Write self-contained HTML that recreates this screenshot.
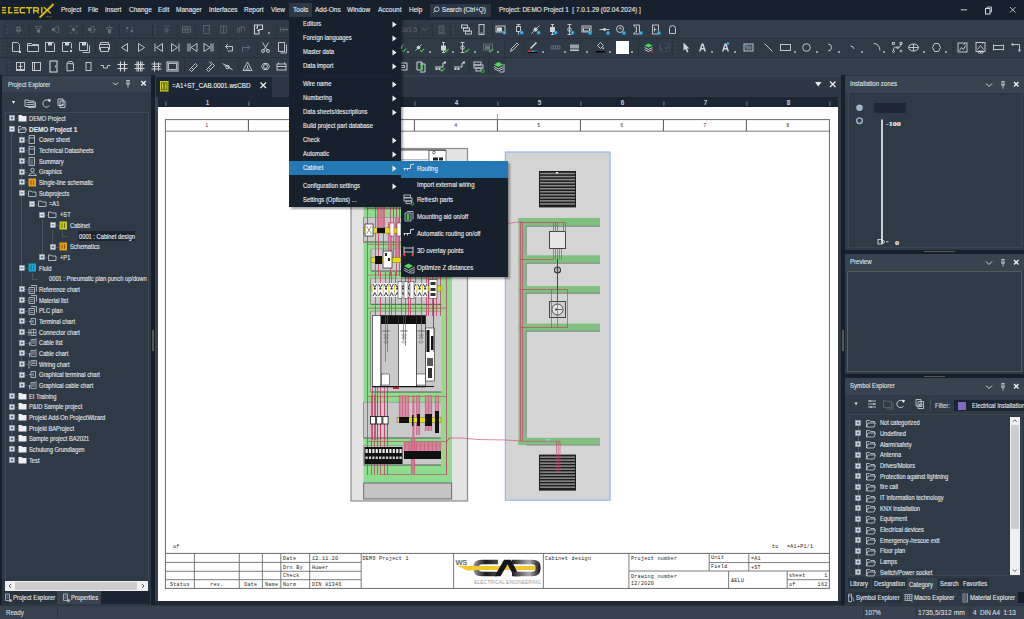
<!DOCTYPE html>
<html><head><meta charset="utf-8">
<style>
*{box-sizing:border-box}
html,body{margin:0;padding:0}
body{width:1024px;height:619px;overflow:hidden;position:relative;background:#333e4a;font-family:"Liberation Sans",sans-serif;color:#e6e9ec}
.a{position:absolute}
svg.a{overflow:visible}
.t{position:absolute;white-space:nowrap;-webkit-text-stroke:0.12px currentColor}
</style></head>
<body>
<div class="a" style="left:0px;top:0px;width:1024px;height:20px;background:#16212d;"></div>
<svg class="a" style="left:0px;top:0px;" width="60" height="20" viewBox="0 0 60 20"><g fill="#dcbc0e">
<rect x="2" y="7" width="4.2" height="1.4"/><rect x="2" y="9.6" width="3.6" height="1.3"/><rect x="2" y="12" width="4.2" height="1.4"/>
<rect x="8.2" y="7" width="1.4" height="6.4"/><rect x="8.2" y="12" width="4.4" height="1.4"/><rect x="8.2" y="7" width="2.4" height="1.3"/>
<rect x="14" y="7" width="4.8" height="1.4"/><rect x="14" y="9.6" width="4" height="1.3"/><rect x="14" y="12" width="4.8" height="1.4"/>
</g>
<g fill="none" stroke="#dcbc0e" stroke-width="1.4">
<path d="M25.2 7.7 H21.3 Q20.3 7.7 20.3 9 V11.4 Q20.3 12.7 21.3 12.7 H25.2"/>
<path d="M26 7.7 H32.3 M29.15 7.7 V13.4"/>
<path d="M33.7 13.4 V7.7 H37 Q38.6 7.7 38.6 9.2 Q38.6 10.7 37 10.7 H33.7 M36.6 10.7 L38.8 13.4"/>
<path d="M41.75 7 V13.4"/>
<path d="M43.8 7.2 L50.8 13.2"/>
</g>
<path d="M53.6 4 L39.5 17.6" stroke="#dcbc0e" stroke-width="1.9" fill="none"/>
<rect x="46" y="16.2" width="6" height="0.9" fill="#5a5020"/>
</svg>
<div class="a" style="left:289px;top:3px;width:23px;height:14px;background:#2e3945;"></div>
<div class="t" style="left:60.7px;top:6.43px;font-size:7px;line-height:7px;color:#e6e9ee;font-weight:normal;font-family:'Liberation Sans';transform:scaleX(0.93);transform-origin:0 0;">Project</div>
<div class="t" style="left:88px;top:6.43px;font-size:7px;line-height:7px;color:#e6e9ee;font-weight:normal;font-family:'Liberation Sans';transform:scaleX(0.93);transform-origin:0 0;">File</div>
<div class="t" style="left:105px;top:6.43px;font-size:7px;line-height:7px;color:#e6e9ee;font-weight:normal;font-family:'Liberation Sans';transform:scaleX(0.93);transform-origin:0 0;">Insert</div>
<div class="t" style="left:129px;top:6.43px;font-size:7px;line-height:7px;color:#e6e9ee;font-weight:normal;font-family:'Liberation Sans';transform:scaleX(0.93);transform-origin:0 0;">Change</div>
<div class="t" style="left:157.6px;top:6.43px;font-size:7px;line-height:7px;color:#e6e9ee;font-weight:normal;font-family:'Liberation Sans';transform:scaleX(0.93);transform-origin:0 0;">Edit</div>
<div class="t" style="left:175.8px;top:6.43px;font-size:7px;line-height:7px;color:#e6e9ee;font-weight:normal;font-family:'Liberation Sans';transform:scaleX(0.93);transform-origin:0 0;">Manager</div>
<div class="t" style="left:208.5px;top:6.43px;font-size:7px;line-height:7px;color:#e6e9ee;font-weight:normal;font-family:'Liberation Sans';transform:scaleX(0.93);transform-origin:0 0;">Interfaces</div>
<div class="t" style="left:244px;top:6.43px;font-size:7px;line-height:7px;color:#e6e9ee;font-weight:normal;font-family:'Liberation Sans';transform:scaleX(0.93);transform-origin:0 0;">Report</div>
<div class="t" style="left:271px;top:6.43px;font-size:7px;line-height:7px;color:#e6e9ee;font-weight:normal;font-family:'Liberation Sans';transform:scaleX(0.93);transform-origin:0 0;">View</div>
<div class="t" style="left:292.5px;top:6.43px;font-size:7px;line-height:7px;color:#e6e9ee;font-weight:normal;font-family:'Liberation Sans';transform:scaleX(0.93);transform-origin:0 0;">Tools</div>
<div class="t" style="left:315px;top:6.43px;font-size:7px;line-height:7px;color:#e6e9ee;font-weight:normal;font-family:'Liberation Sans';transform:scaleX(0.93);transform-origin:0 0;">Add-Ons</div>
<div class="t" style="left:346.7px;top:6.43px;font-size:7px;line-height:7px;color:#e6e9ee;font-weight:normal;font-family:'Liberation Sans';transform:scaleX(0.93);transform-origin:0 0;">Window</div>
<div class="t" style="left:377.5px;top:6.43px;font-size:7px;line-height:7px;color:#e6e9ee;font-weight:normal;font-family:'Liberation Sans';transform:scaleX(0.93);transform-origin:0 0;">Account</div>
<div class="t" style="left:408.5px;top:6.43px;font-size:7px;line-height:7px;color:#e6e9ee;font-weight:normal;font-family:'Liberation Sans';transform:scaleX(0.93);transform-origin:0 0;">Help</div>
<div class="a" style="left:430px;top:3.5px;width:61px;height:13px;background:#2c3743;border-radius:1px"></div>
<svg class="a" style="left:433px;top:6px;" width="7" height="7" viewBox="0 0 7 7"><circle cx="3.8" cy="3.2" r="2.3" fill="none" stroke="#cfd4da" stroke-width="0.9"/><path d="M2.2 4.8 L0.3 6.7" stroke="#cfd4da" stroke-width="0.9"/></svg>
<div class="t" style="left:442px;top:6.43px;font-size:7px;line-height:7px;color:#e6e9ee;font-weight:normal;font-family:'Liberation Sans';transform:scaleX(0.89);transform-origin:0 0;">Search (Ctrl+Q)</div>
<div class="t" style="left:498.5px;top:6.43px;font-size:7px;line-height:7px;color:#e6e9ee;font-weight:normal;font-family:'Liberation Sans';transform:scaleX(0.915);transform-origin:0 0;">Project: DEMO Project 1&nbsp; [ 7.0.1.29 (02.04.2024) ]</div>
<svg class="a" style="left:960px;top:4px;" width="64" height="12" viewBox="0 0 64 12"><path d="M0.8 5.8 H7" stroke="#c9ced4" stroke-width="1"/>
<rect x="25.5" y="4.5" width="4.5" height="5.5" fill="none" stroke="#d0d5da" stroke-width="1"/><path d="M27 4.5 V3 H31.5 V8 H30" fill="none" stroke="#d0d5da" stroke-width="0.9"/>
<path d="M50 3 L55.5 8.5 M55.5 3 L50 8.5" stroke="#c9ced4" stroke-width="0.9"/></svg>
<div class="a" style="left:0px;top:20px;width:1024px;height:57px;background:#323e4a;"></div>
<div class="a" style="left:3px;top:20px;width:677px;height:18px;background:#2e3a46;"></div>
<div class="a" style="left:2px;top:39px;width:1022px;height:17.5px;background:#2e3a46;"></div>
<div class="a" style="left:5px;top:57.5px;width:501px;height:17.5px;background:#2e3a46;"></div>
<div class="a" style="left:0px;top:38px;width:1024px;height:1px;background:#27313b;"></div>
<div class="a" style="left:0px;top:56.5px;width:1024px;height:1px;background:#27313b;"></div>
<div class="a" style="left:0px;top:75px;width:1024px;height:0.8px;background:#27313b;"></div>
<div class="a" style="left:28.5px;top:21.5px;width:1px;height:15px;background:#27313b;"></div>
<div class="a" style="left:82px;top:21.5px;width:1px;height:15px;background:#27313b;"></div>
<div class="a" style="left:118.5px;top:21.5px;width:1px;height:15px;background:#27313b;"></div>
<div class="a" style="left:152px;top:21.5px;width:1px;height:15px;background:#27313b;"></div>
<div class="a" style="left:176.5px;top:21.5px;width:1px;height:15px;background:#27313b;"></div>
<div class="a" style="left:195px;top:21.5px;width:1px;height:15px;background:#27313b;"></div>
<div class="a" style="left:250px;top:21.5px;width:1px;height:15px;background:#27313b;"></div>
<div class="a" style="left:275.5px;top:21.5px;width:1px;height:15px;background:#27313b;"></div>
<div class="a" style="left:418px;top:21.5px;width:1px;height:15px;background:#27313b;"></div>
<div class="a" style="left:431.5px;top:21.5px;width:1px;height:15px;background:#27313b;"></div>
<div class="a" style="left:450px;top:21.5px;width:1px;height:15px;background:#27313b;"></div>
<div class="a" style="left:491.5px;top:21.5px;width:1px;height:15px;background:#27313b;"></div>
<div class="a" style="left:94.5px;top:40.5px;width:1px;height:14.5px;background:#27313b;"></div>
<div class="a" style="left:114.5px;top:40.5px;width:1px;height:14.5px;background:#27313b;"></div>
<div class="a" style="left:219.5px;top:40.5px;width:1px;height:14.5px;background:#27313b;"></div>
<div class="a" style="left:256.5px;top:40.5px;width:1px;height:14.5px;background:#27313b;"></div>
<div class="a" style="left:503.5px;top:40.5px;width:1px;height:14.5px;background:#27313b;"></div>
<div class="a" style="left:523.5px;top:40.5px;width:1px;height:14.5px;background:#27313b;"></div>
<div class="a" style="left:638px;top:40.5px;width:1px;height:14.5px;background:#27313b;"></div>
<div class="a" style="left:672px;top:40.5px;width:1px;height:14.5px;background:#27313b;"></div>
<div class="a" style="left:952.5px;top:40.5px;width:1px;height:14.5px;background:#27313b;"></div>
<div class="a" style="left:989.5px;top:40.5px;width:1px;height:14.5px;background:#27313b;"></div>
<div class="a" style="left:183.5px;top:59px;width:1px;height:14.5px;background:#27313b;"></div>
<div class="a" style="left:237.5px;top:59px;width:1px;height:14.5px;background:#27313b;"></div>
<div class="a" style="left:412px;top:59px;width:1px;height:14.5px;background:#27313b;"></div>
<div class="a" style="left:449px;top:59px;width:1px;height:14.5px;background:#27313b;"></div>
<div class="a" style="left:469px;top:59px;width:1px;height:14.5px;background:#27313b;"></div>
<div class="a" style="left:488px;top:59px;width:1px;height:14.5px;background:#27313b;"></div>
<svg class="a" style="left:-1px;top:21px" width="16" height="16" viewBox="-8 -8 16 16"><rect x="-0.5" y="-4.5" width="1" height="1" fill="#5d6670"/><rect x="-0.5" y="-0.5" width="1" height="1" fill="#5d6670"/><rect x="-0.5" y="3.5" width="1" height="1" fill="#5d6670"/></svg>
<svg class="a" style="left:147px;top:21px" width="16" height="16" viewBox="-8 -8 16 16"><rect x="-0.5" y="-4.5" width="1" height="1" fill="#5d6670"/><rect x="-0.5" y="-0.5" width="1" height="1" fill="#5d6670"/><rect x="-0.5" y="3.5" width="1" height="1" fill="#5d6670"/></svg>
<svg class="a" style="left:445px;top:21px" width="16" height="16" viewBox="-8 -8 16 16"><rect x="-0.5" y="-4.5" width="1" height="1" fill="#5d6670"/><rect x="-0.5" y="-0.5" width="1" height="1" fill="#5d6670"/><rect x="-0.5" y="3.5" width="1" height="1" fill="#5d6670"/></svg>
<svg class="a" style="left:10px;top:21px" width="16" height="16" viewBox="-8 -8 16 16"><g transform="translate(0.5 0.5) scale(0.78)"><path d="M-1.5 -4 V3 M1.5 -4 V3 M-4 1.5 H4 M0 3 V5" stroke="#6a737d" stroke-width="0.9" fill="none" /><rect x="-2" y="-3" width="4" height="5" stroke="#6a737d" stroke-width="0.9" fill="none"/></g></svg>
<svg class="a" style="left:30px;top:21px" width="16" height="16" viewBox="-8 -8 16 16"><g transform="translate(0.5 0.5) scale(0.78)"><path d="M-4 -4 H4 L2 -1 H-2 Z" stroke="#6a737d" stroke-width="0.9" fill="none" /><rect x="-1.5" y="0.5" width="3" height="3" stroke="#6a737d" stroke-width="1" fill="#6a737d"/></g></svg>
<svg class="a" style="left:47px;top:21px" width="16" height="16" viewBox="-8 -8 16 16"><g transform="translate(0.5 0.5) scale(0.78)"><rect x="-4" y="-1.5" width="3" height="3" stroke="#6a737d" stroke-width="1" fill="#6a737d"/><path d="M-1 -1.5 L2 -4 H4 V4 H2 L-1 1.5" stroke="#6a737d" stroke-width="0.9" fill="none" /></g></svg>
<svg class="a" style="left:65px;top:21px" width="16" height="16" viewBox="-8 -8 16 16"><g transform="translate(0.5 0.5) scale(0.78)"><path d="M-4.5 -4.5 h2 M2.5 -4.5 h2 v2 M4.5 2.5 v2 h-2 M-2.5 4.5 h-2 v-2 M-4.5 -2.5 v-2" stroke="#6a737d" stroke-width="0.9" fill="none" /><circle cx="0" cy="0" r="1.8" stroke="#6a737d" stroke-width="1" fill="#6a737d"/></g></svg>
<svg class="a" style="left:84px;top:21px" width="16" height="16" viewBox="-8 -8 16 16"><g transform="translate(0.5 0.5) scale(0.78)"><rect x="-2" y="-3.5" width="4" height="7" stroke="#6a737d" stroke-width="0.9" fill="none"/><path d="M-5 0 H-2 M2 0 H5" stroke="#6a737d" stroke-width="0.9" fill="none" /><rect x="-5" y="-1.5" width="3" height="3" stroke="#6a737d" stroke-width="1" fill="#6a737d"/></g></svg>
<svg class="a" style="left:101px;top:21px" width="16" height="16" viewBox="-8 -8 16 16"><g transform="translate(0.5 0.5) scale(0.78)"><path d="M0 -5 V-3 M-4 -2.5 H4 L2 0 H-2 Z" stroke="#6a737d" stroke-width="0.9" fill="none" /><rect x="-1.5" y="1" width="3" height="3.5" stroke="#6a737d" stroke-width="1" fill="#6a737d"/></g></svg>
<svg class="a" style="left:121px;top:21px" width="16" height="16" viewBox="-8 -8 16 16"><g transform="translate(0.5 0.5) scale(0.78)"><rect x="-4" y="-3" width="2.5" height="2.5" stroke="#6a737d" stroke-width="0" fill="#6a737d"/><rect x="1.5" y="0.5" width="3" height="3" stroke="#6a737d" stroke-width="0" fill="#6a737d"/><path d="M2 -2 h2 M-4 2 h2" stroke="#6a737d" stroke-width="0.9" fill="none" /></g></svg>
<svg class="a" style="left:158px;top:21px" width="16" height="16" viewBox="-8 -8 16 16"><g transform="translate(0.5 0.5) scale(0.78)"><path d="M0 -5 V-3 M-3 -5 L-2 -3.5 M3 -5 L2 -3.5" stroke="#6a737d" stroke-width="0.9" fill="none" /><path d="M-2 -1 H2 V2 H-2 Z M0 2 V5" stroke="#6a737d" stroke-width="0.9" fill="none" /></g></svg>
<svg class="a" style="left:178px;top:21px" width="16" height="16" viewBox="-8 -8 16 16"><g transform="translate(0.5 0.5) scale(0.78)"><rect x="-5" y="-3.5" width="10" height="7" stroke="#6a737d" stroke-width="0.9" fill="none"/><path d="M-5 0 H5 M-1.7 -3.5 V3.5 M1.7 -3.5 V3.5" stroke="#6a737d" stroke-width="0.9" fill="none" /></g></svg>
<svg class="a" style="left:198px;top:21px" width="16" height="16" viewBox="-8 -8 16 16"><g transform="translate(0.5 0.5) scale(0.78)"><rect x="-3.5" y="-5" width="7" height="10" stroke="#6a737d" stroke-width="0.9" fill="none"/><path d="M2 -1 V1" stroke="#6a737d" stroke-width="0.9" fill="none" /></g></svg>
<svg class="a" style="left:215px;top:21px" width="16" height="16" viewBox="-8 -8 16 16"><g transform="translate(0.5 0.5) scale(0.78)"><rect x="-3.5" y="-4.5" width="7" height="9" stroke="#6a737d" stroke-width="0.9" fill="none"/><path d="M0 -4.5 V4.5" stroke="#6a737d" stroke-width="0.9" fill="none" /></g></svg>
<svg class="a" style="left:232px;top:21px" width="16" height="16" viewBox="-8 -8 16 16"><g transform="translate(0.5 0.5) scale(0.78)"><path d="M-4 -1 L3 -4 L5 -3 V2 M-4 -1 V4 M-1.5 -2 V4.5 M1 -3 V4" stroke="#6a737d" stroke-width="0.9" fill="none" /></g></svg>
<svg class="a" style="left:250px;top:21px" width="16" height="16" viewBox="-8 -8 16 16"><g transform="translate(0.5 0.5)"><path d="M-4 -4.5 H4 V0 H0.5 V4.5 H-4 Z M-1 -4.5 V-1.5 H-2.5 M0.5 1 H-1.5" stroke="#d0d4d9" stroke-width="1.1" fill="none" /></g></svg>
<svg class="a" style="left:276px;top:21px" width="16" height="16" viewBox="-8 -8 16 16"><g transform="translate(0.5 0.5) scale(0.78)"><path d="M-5 -3 V3 M-5 0 H5 M-1 -3 V3 M3 -2 V2" stroke="#6a737d" stroke-width="0.9" fill="none" /></g></svg>
<svg class="a" style="left:433px;top:21px" width="16" height="16" viewBox="-8 -8 16 16"><g transform="translate(0.5 0.5) scale(0.78)"><rect x="-3" y="-4.5" width="6" height="8" stroke="#6a737d" stroke-width="0.9" fill="none"/><path d="M-1.5 -2.5 h3 M-1.5 -0.5 h3 M-1.5 1.5 h3 M-5 5 H5" stroke="#6a737d" stroke-width="0.8" fill="none" /></g></svg>
<svg class="a" style="left:458px;top:21px" width="16" height="16" viewBox="-8 -8 16 16"><g transform="translate(0.5 0.5)"><rect x="-5" y="-4.5" width="6" height="3" stroke="#d0d4d9" stroke-width="0.9" fill="none"/><rect x="-3" y="-1.5" width="6" height="3" stroke="#d0d4d9" stroke-width="0.9" fill="none"/><rect x="-1" y="1.5" width="6" height="3" stroke="#d0d4d9" stroke-width="0.9" fill="none"/></g></svg>
<svg class="a" style="left:473px;top:21px" width="16" height="16" viewBox="-8 -8 16 16"><g transform="translate(0.5 0.5)"><rect x="-2.5" y="-5" width="5" height="10" stroke="#d0d4d9" stroke-width="0.9" fill="none"/><path d="M-1 3.5 H1" stroke="#d0d4d9" stroke-width="0.9" fill="none" /></g></svg>
<svg class="a" style="left:492px;top:21px" width="16" height="16" viewBox="-8 -8 16 16"><g transform="translate(0.5 0.5)"><rect x="-4.5" y="-3.5" width="9" height="6" stroke="#d0d4d9" stroke-width="0.9" fill="none"/><rect x="-3" y="-1.5" width="4" height="3" stroke="#d0d4d9" stroke-width="1" fill="#d0d4d9"/><circle cx="3.8" cy="3.2" r="1.9" stroke="none" stroke-width="0" fill="#1a98d5"/><path d="M3.8 2.3000000000000003 V4.1000000000000005" stroke="#fff" stroke-width="0.5" fill="none" /></g></svg>
<svg class="a" style="left:510px;top:21px" width="16" height="16" viewBox="-8 -8 16 16"><g transform="translate(0.5 0.5)"><rect x="-2" y="-3" width="4" height="5" stroke="#d0d4d9" stroke-width="0.9" fill="none"/><path d="M0 -5 V-3 M0 2 V5 M-2 -5 H2" stroke="#d0d4d9" stroke-width="0.9" fill="none" /><circle cx="3.2" cy="3.2" r="1.9" stroke="none" stroke-width="0" fill="#1a98d5"/><path d="M3.2 2.3000000000000003 V4.1000000000000005" stroke="#fff" stroke-width="0.5" fill="none" /></g></svg>
<svg class="a" style="left:527px;top:21px" width="16" height="16" viewBox="-8 -8 16 16"><g transform="translate(0.5 0.5)"><path d="M-4 4 L4 -4" stroke="#d0d4d9" stroke-width="0.9" fill="none" /><circle cx="0" cy="0" r="1.6" stroke="#d0d4d9" stroke-width="1" fill="#d0d4d9"/><circle cx="3.2" cy="3.2" r="1.9" stroke="none" stroke-width="0" fill="#1a98d5"/><path d="M3.2 2.3000000000000003 V4.1000000000000005" stroke="#fff" stroke-width="0.5" fill="none" /></g></svg>
<svg class="a" style="left:544px;top:21px" width="16" height="16" viewBox="-8 -8 16 16"><g transform="translate(0.5 0.5)"><path d="M0 -5 V5 M-1.5 -5 H1.5 M-1.5 5 H1.5" stroke="#d0d4d9" stroke-width="0.9" fill="none" /><rect x="-2" y="-2" width="4" height="4" stroke="#d0d4d9" stroke-width="1" fill="#d0d4d9"/><circle cx="3.2" cy="3.2" r="1.9" stroke="none" stroke-width="0" fill="#1a98d5"/><path d="M3.2 2.3000000000000003 V4.1000000000000005" stroke="#fff" stroke-width="0.5" fill="none" /></g></svg>
<svg class="a" style="left:561px;top:21px" width="16" height="16" viewBox="-8 -8 16 16"><g transform="translate(0.5 0.5)"><path d="M0 -5 V5 M-2 -5 H2 M-2 5 H2" stroke="#d0d4d9" stroke-width="0.9" fill="none" /><circle cx="0" cy="0" r="1.8" stroke="#d0d4d9" stroke-width="0.9" fill="none"/><circle cx="3.2" cy="3.2" r="1.9" stroke="none" stroke-width="0" fill="#1a98d5"/><path d="M3.2 2.3000000000000003 V4.1000000000000005" stroke="#fff" stroke-width="0.5" fill="none" /></g></svg>
<svg class="a" style="left:578px;top:21px" width="16" height="16" viewBox="-8 -8 16 16"><g transform="translate(0.5 0.5)"><rect x="-4.5" y="-3.5" width="9" height="6" stroke="#d0d4d9" stroke-width="0.9" fill="none"/><rect x="-3" y="-1.5" width="6" height="3" stroke="#d0d4d9" stroke-width="0.9" fill="none"/><circle cx="3.5" cy="3.5" r="1.9" stroke="none" stroke-width="0" fill="#1a98d5"/><path d="M3.5 2.6 V4.4" stroke="#fff" stroke-width="0.5" fill="none" /></g></svg>
<svg class="a" style="left:596px;top:21px" width="16" height="16" viewBox="-8 -8 16 16"><g transform="translate(0.5 0.5)"><path d="M-5 0 H5" stroke="#d0d4d9" stroke-width="0.9" fill="none" /><rect x="-1" y="-1.5" width="2" height="3" stroke="#d0d4d9" stroke-width="0" fill="#d0d4d9"/><circle cx="3.5" cy="3.5" r="1.9" stroke="none" stroke-width="0" fill="#1a98d5"/><path d="M3.5 2.6 V4.4" stroke="#fff" stroke-width="0.5" fill="none" /></g></svg>
<svg class="a" style="left:612px;top:21px" width="16" height="16" viewBox="-8 -8 16 16"><g transform="translate(0.5 0.5)"><circle cx="-0.5" cy="-0.5" r="3.5" stroke="#d0d4d9" stroke-width="0.9" fill="none"/><path d="M-0.5 -2.5 V-0.5 H1" stroke="#d0d4d9" stroke-width="0.9" fill="none" /><circle cx="3.5" cy="3.5" r="1.9" stroke="none" stroke-width="0" fill="#1a98d5"/><path d="M3.5 2.6 V4.4" stroke="#fff" stroke-width="0.5" fill="none" /></g></svg>
<svg class="a" style="left:629px;top:21px" width="16" height="16" viewBox="-8 -8 16 16"><g transform="translate(0.5 0.5)"><path d="M-4 -4.5 H2 V4.5 H-4 M-4 -4.5 L-2 -2 M-4 4.5 L-2 2 M-1 -3 V3" stroke="#d0d4d9" stroke-width="0.9" fill="none" /><circle cx="3.5" cy="3.5" r="1.9" stroke="none" stroke-width="0" fill="#1a98d5"/><path d="M3.5 2.6 V4.4" stroke="#fff" stroke-width="0.5" fill="none" /></g></svg>
<svg class="a" style="left:647px;top:21px" width="16" height="16" viewBox="-8 -8 16 16"><g transform="translate(0.5 0.5)"><rect x="-3" y="-4.5" width="6" height="9" stroke="#d0d4d9" stroke-width="0.9" fill="none"/><path d="M-1 -2 V2 M-1 0 H1" stroke="#d0d4d9" stroke-width="0.9" fill="none" /><circle cx="3.5" cy="3.5" r="1.9" stroke="none" stroke-width="0" fill="#1a98d5"/><path d="M3.5 2.6 V4.4" stroke="#fff" stroke-width="0.5" fill="none" /></g></svg>
<svg class="a" style="left:664px;top:21px" width="16" height="16" viewBox="-8 -8 16 16"><g transform="translate(0.5 0.5)"><path d="M-3 4 V-1 Q-3 -4 0 -4 Q3 -4 3 -1 V4 Z" stroke="#d0d4d9" stroke-width="0.9" fill="none" /></g></svg>
<svg class="a" style="left:260.5px;top:25px" width="16" height="16" viewBox="-8 -8 16 16"><rect x="-0.8" y="-0.8" width="1.6" height="1.6" fill="#d0d4d9"/></svg>
<div class="t" style="left:401px;top:25.63px;font-size:7px;line-height:7px;color:#58626c;letter-spacing:-0.2px;font-weight:normal;font-family:'Liberation Sans';">3x1,5</div>
<svg class="a" style="left:421px;top:26px" width="8" height="6" viewBox="0 0 8 6"><path d="M1 1.5 L4 4.5 L7 1.5" stroke="#58626c" fill="none" stroke-width="0.9"/></svg>
<svg class="a" style="left:-3px;top:39.5px" width="16" height="16" viewBox="-8 -8 16 16"><rect x="-0.5" y="-4.5" width="1" height="1" fill="#5d6670"/><rect x="-0.5" y="-0.5" width="1" height="1" fill="#5d6670"/><rect x="-0.5" y="3.5" width="1" height="1" fill="#5d6670"/></svg>
<svg class="a" style="left:667px;top:39.5px" width="16" height="16" viewBox="-8 -8 16 16"><rect x="-0.5" y="-4.5" width="1" height="1" fill="#5d6670"/><rect x="-0.5" y="-0.5" width="1" height="1" fill="#5d6670"/><rect x="-0.5" y="3.5" width="1" height="1" fill="#5d6670"/></svg>
<svg class="a" style="left:8px;top:39px" width="16" height="16" viewBox="-8 -8 16 16"><g transform="translate(0.5 0.5)"><path d="M-4 -5 H1 L3 -3 V4 H-4 Z" stroke="#d0d4d9" stroke-width="0.9" fill="none" /><rect x="2.5" y="3.5" width="2" height="2" stroke="none" stroke-width="0" fill="#d0d4d9"/></g></svg>
<svg class="a" style="left:25px;top:39px" width="16" height="16" viewBox="-8 -8 16 16"><g transform="translate(0.5 0.5)"><path d="M-6 -4 H-2 L-1 -3 H5 V4 H-6 Z M-6 -2 H5" stroke="#d0d4d9" stroke-width="0.9" fill="none" /></g></svg>
<svg class="a" style="left:42px;top:39px" width="16" height="16" viewBox="-8 -8 16 16"><g transform="translate(0.5 0.5)"><path d="M-5 -5 H3 L4 -4 V4 H-5 Z" stroke="#d0d4d9" stroke-width="0.9" fill="none" /><rect x="-2.5" y="-5.5" width="4" height="3.5" stroke="none" stroke-width="0" fill="#d0d4d9"/></g></svg>
<svg class="a" style="left:59px;top:39px" width="16" height="16" viewBox="-8 -8 16 16"><g transform="translate(0.5 0.5)"><path d="M-5 -5 H3 L4 -4 V1 M1 4 H-5 V-5" stroke="#d0d4d9" stroke-width="0.9" fill="none" /><rect x="-2.5" y="-5.5" width="4" height="3.5" stroke="none" stroke-width="0" fill="#d0d4d9"/><rect x="2.5" y="2.5" width="2" height="2" stroke="none" stroke-width="0" fill="#d0d4d9"/></g></svg>
<svg class="a" style="left:76px;top:39px" width="16" height="16" viewBox="-8 -8 16 16"><g transform="translate(0.5 0.5)"><path d="M-5 -5 H2 L3 -4 V3 H-5 Z M5 -2 V5 H-2" stroke="#d0d4d9" stroke-width="0.9" fill="none" /><rect x="-2.5" y="-5.5" width="4" height="3.5" stroke="none" stroke-width="0" fill="#d0d4d9"/></g></svg>
<svg class="a" style="left:96px;top:39px" width="16" height="16" viewBox="-8 -8 16 16"><g transform="translate(0.5 0.5)"><path d="M-4 -3 V-5 H4 V-3 M-4 2 H-5 V-3 H5 V2 H4 M-4 0 V4 H4 V0 Z" stroke="#d0d4d9" stroke-width="0.9" fill="none" /></g></svg>
<svg class="a" style="left:116px;top:39px" width="16" height="16" viewBox="-8 -8 16 16"><g transform="translate(0.5 0.5)"><path d="M3 -4 L-3 0 L3 4 Z" stroke="#d0d4d9" stroke-width="0.9" fill="none" /></g></svg>
<svg class="a" style="left:133px;top:39px" width="16" height="16" viewBox="-8 -8 16 16"><g transform="translate(0.5 0.5)"><path d="M-3 -4 L3 0 L-3 4 Z" stroke="#d0d4d9" stroke-width="0.9" fill="none" /></g></svg>
<svg class="a" style="left:150px;top:39px" width="16" height="16" viewBox="-8 -8 16 16"><g transform="translate(0.5 0.5)"><path d="M4 -4 L-2 0 L4 4 Z M-3.5 -4 V4" stroke="#d0d4d9" stroke-width="0.9" fill="none" /></g></svg>
<svg class="a" style="left:167px;top:39px" width="16" height="16" viewBox="-8 -8 16 16"><g transform="translate(0.5 0.5)"><path d="M-4 -4 L2 0 L-4 4 Z M3.5 -4 V4" stroke="#d0d4d9" stroke-width="0.9" fill="none" /></g></svg>
<svg class="a" style="left:184px;top:39px" width="16" height="16" viewBox="-8 -8 16 16"><g transform="translate(0.5 0.5)"><path d="M4.5 -4 L-1.5 0 L4.5 4 Z M-2.5 -4 V4 M-4.5 -4 V4" stroke="#d0d4d9" stroke-width="0.9" fill="none" /></g></svg>
<svg class="a" style="left:200px;top:39px" width="16" height="16" viewBox="-8 -8 16 16"><g transform="translate(0.5 0.5)"><path d="M-4.5 -4 L1.5 0 L-4.5 4 Z M2.5 -4 V4 M4.5 -4 V4" stroke="#d0d4d9" stroke-width="0.9" fill="none" /></g></svg>
<svg class="a" style="left:221px;top:39px" width="16" height="16" viewBox="-8 -8 16 16"><g transform="translate(0.5 0.5)"><path d="M-3.5 -1 H3 V3.5 H-2 M-1.5 -3.5 L-4 -1 L-1.5 1.5" stroke="#d0d4d9" stroke-width="0.9" fill="none" /></g></svg>
<svg class="a" style="left:238px;top:39px" width="16" height="16" viewBox="-8 -8 16 16"><g transform="translate(0.5 0.5)"><path d="M-4 4 V0 H3 M1 -2.5 L3.5 0 L1 2.5" stroke="#6a737d" stroke-width="0.9" fill="none" /></g></svg>
<svg class="a" style="left:257px;top:39px" width="16" height="16" viewBox="-8 -8 16 16"><g transform="translate(0.5 0.5)"><path d="M-3 -5 L2 3 M3 -5 L-2 3" stroke="#d0d4d9" stroke-width="0.9" fill="none" /><circle cx="-2.5" cy="3.5" r="1.5" stroke="#d0d4d9" stroke-width="0.9" fill="none"/><circle cx="2.5" cy="3.5" r="1.5" stroke="#d0d4d9" stroke-width="0.9" fill="none"/></g></svg>
<svg class="a" style="left:274px;top:39px" width="16" height="16" viewBox="-8 -8 16 16"><g transform="translate(0.5 0.5)"><path d="M-4 -5 H2 V4 H-4 Z M4 -3 V5.5 H-2" stroke="#d0d4d9" stroke-width="0.9" fill="none" /></g></svg>
<svg class="a" style="left:393px;top:39px" width="16" height="16" viewBox="-8 -8 16 16"><g transform="translate(0.5 0.5)"><path d="M-4 3 L2 -3" stroke="#d0d4d9" stroke-width="0.9" fill="none" /><circle cx="-1" cy="0" r="1.4" stroke="#d0d4d9" stroke-width="1" fill="#d0d4d9"/><path d="M0.5 2.8 L1.9 4.199999999999999 L4.7 1.1999999999999997" stroke="#3cc83c" stroke-width="1.1" fill="none" /></g></svg>
<svg class="a" style="left:411px;top:39px" width="16" height="16" viewBox="-8 -8 16 16"><g transform="translate(0.5 0.5)"><path d="M-4 3 L2 -3" stroke="#d0d4d9" stroke-width="0.9" fill="none" /><circle cx="-1" cy="0" r="1.4" stroke="#d0d4d9" stroke-width="1" fill="#d0d4d9"/><path d="M0.5 2.8 L1.9 4.199999999999999 L4.7 1.1999999999999997" stroke="#3cc83c" stroke-width="1.1" fill="none" /></g></svg>
<svg class="a" style="left:435px;top:39px" width="16" height="16" viewBox="-8 -8 16 16"><g transform="translate(0.5 0.5)"><path d="M0 -5 V5 M-1.5 -5 H1.5 M-1.5 5 H1.5" stroke="#d0d4d9" stroke-width="0.9" fill="none" /><rect x="-2" y="-1.5" width="4" height="4" stroke="#d0d4d9" stroke-width="1" fill="#d0d4d9"/><path d="M1 3 L2.4 4.4 L5.2 1.4" stroke="#3cc83c" stroke-width="1.1" fill="none" /></g></svg>
<svg class="a" style="left:456px;top:39px" width="16" height="16" viewBox="-8 -8 16 16"><g transform="translate(0.5 0.5)"><path d="M-2 -5 V5 M-4 -5 H0 M-4 5 H0" stroke="#d0d4d9" stroke-width="0.9" fill="none" /><circle cx="-2" cy="0" r="1.8" stroke="#d0d4d9" stroke-width="0.9" fill="none"/><path d="M0.5 3 L1.9 4.4 L4.7 1.4" stroke="#3cc83c" stroke-width="1.1" fill="none" /></g></svg>
<svg class="a" style="left:480px;top:39px" width="16" height="16" viewBox="-8 -8 16 16"><g transform="translate(0.5 0.5)"><rect x="-5" y="-3.5" width="9" height="6" stroke="#6a737d" stroke-width="0.9" fill="none"/><rect x="-3" y="-1.5" width="4" height="3" stroke="#6a737d" stroke-width="1" fill="#6a737d"/><path d="M0.5 3 L1.9 4.4 L4.7 1.4" stroke="#3cc83c" stroke-width="1.1" fill="none" /></g></svg>
<svg class="a" style="left:506px;top:39px" width="16" height="16" viewBox="-8 -8 16 16"><g transform="translate(0.5 0.5)"><path d="M-4 4 L-3 1 L2.5 -4.5 L4 -3 L-1.5 2.5 Z" stroke="#d0d4d9" stroke-width="0.9" fill="none" /></g></svg>
<svg class="a" style="left:525px;top:39px" width="16" height="16" viewBox="-8 -8 16 16"><g transform="translate(0.5 0.5)"><path d="M-3 1 L3 -5" stroke="#d0d4d9" stroke-width="1.6" fill="none" /><path d="M-5.5 3 H-2 V4.6 H-5.5 Z" fill="#e03030"/><path d="M-2 3 H1 V4.6 H-2 Z" fill="#30b030"/><path d="M1 3 H4 V4.6 H1 Z" fill="#3050e0"/><path d="M-5.5 4.6 H4 V5.6 H-5.5 Z" fill="#000"/></g></svg>
<svg class="a" style="left:547px;top:39px" width="16" height="16" viewBox="-8 -8 16 16"><g transform="translate(0.5 0.5)"><path d="M-4.5 -1.5 H4.5 M-4.5 -1.5 V1.5 M-2.2 -1.5 V1 M0 -1.5 V1.5 M2.2 -1.5 V1 M4.5 -1.5 V1.5 M-4.5 1.5 H4.5" stroke="#6a737d" stroke-width="0.9" fill="none" /></g></svg>
<svg class="a" style="left:566px;top:39px" width="16" height="16" viewBox="-8 -8 16 16"><g transform="translate(0.5 0.5)"><path d="M-4.5 -3 H4.5 V1 H-4.5 Z" fill="#9aa2aa"/><path d="M-4.5 2 H4.5 V3.4 H-4.5 Z" fill="#d0d4d9"/></g></svg>
<svg class="a" style="left:592px;top:39px" width="16" height="16" viewBox="-8 -8 16 16"><g transform="translate(0.5 0.5)"><path d="M-3 -2 L0 -5 L3 -2 L0 1 Z" stroke="#d0d4d9" stroke-width="0.9" fill="none" /><rect x="2" y="0" width="1.5" height="1.5" stroke="#d0d4d9" stroke-width="0" fill="#d0d4d9"/><path d="M-4.5 3.5 H4.5 V5 H-4.5 Z" fill="#000"/></g></svg>
<svg class="a" style="left:640px;top:39px" width="16" height="16" viewBox="-8 -8 16 16"><g transform="translate(0.5 0.5)"><path d="M-4 -2 L0 -4 L4 -2 L0 0 Z" fill="#4ddb4d"/><path d="M-4 0 L0 2 L4 0 M-4 2 L0 4 L4 2" stroke="#d0d4d9" stroke-width="0.9" fill="none" /><rect x="3" y="3.5" width="1.6" height="1.6" stroke="none" stroke-width="0" fill="#e02020"/></g></svg>
<svg class="a" style="left:656px;top:39px" width="16" height="16" viewBox="-8 -8 16 16"><g transform="translate(0.5 0.5)"><rect x="-5" y="-4" width="10" height="8" stroke="#3d4853" stroke-width="0.9" fill="none"/><path d="M-4 -2 V2 H-2 M0 0 L2 2 L4 -2" stroke="#4d5863" stroke-width="0.9" fill="none" /></g></svg>
<svg class="a" style="left:678px;top:39px" width="16" height="16" viewBox="-8 -8 16 16"><g transform="translate(0.5 0.5)"><path d="M-3 -5 L3 1 L0.5 1 L2 4.5 L0.5 5 L-1 1.5 L-3 3 Z" fill="#d0d4d9"/></g></svg>
<svg class="a" style="left:694px;top:39px" width="16" height="16" viewBox="-8 -8 16 16"><g transform="translate(0.5 0.5)"><path d="M-3.5 4 L-1 -4 H1 L3.5 4 H2 L1.3 2 H-1.3 L-2 4 Z M-0.9 0.6 H0.9 L0 -2.2 Z" fill="#d0d4d9"/></g></svg>
<svg class="a" style="left:717px;top:39px" width="16" height="16" viewBox="-8 -8 16 16"><g transform="translate(0.5 0.5)"><path d="M-3.5 4 L-1 -4 H1 L3.5 4 H2 L1.3 2 H-1.3 L-2 4 Z M-0.9 0.6 H0.9 L0 -2.2 Z" fill="#d0d4d9"/><circle cx="2.5" cy="-4" r="1.3" stroke="none" stroke-width="0" fill="#3ab0e8"/></g></svg>
<svg class="a" style="left:740px;top:39px" width="16" height="16" viewBox="-8 -8 16 16"><g transform="translate(0.5 0.5)"><rect x="-4.5" y="-3.5" width="9" height="7" stroke="#d0d4d9" stroke-width="0.9" fill="none"/><rect x="-3" y="-2" width="6" height="4" stroke="#8a939c" stroke-width="0" fill="#6a747e"/><rect x="-3" y="-2" width="1.5" height="1.5" stroke="none" stroke-width="0" fill="#3ab0e8"/></g></svg>
<svg class="a" style="left:760px;top:39px" width="16" height="16" viewBox="-8 -8 16 16"><g transform="translate(0.5 0.5)"><path d="M-4 -4 L4 4" stroke="#d0d4d9" stroke-width="0.9" fill="none" /></g></svg>
<svg class="a" style="left:777px;top:39px" width="16" height="16" viewBox="-8 -8 16 16"><g transform="translate(0.5 0.5)"><rect x="-5" y="-3" width="10" height="6" stroke="#d0d4d9" stroke-width="0.9" fill="none"/></g></svg>
<svg class="a" style="left:798px;top:39px" width="16" height="16" viewBox="-8 -8 16 16"><g transform="translate(0.5 0.5)"><circle cx="0" cy="0" r="3.8" stroke="#d0d4d9" stroke-width="0.9" fill="none"/></g></svg>
<svg class="a" style="left:821px;top:39px" width="16" height="16" viewBox="-8 -8 16 16"><g transform="translate(0.5 0.5)"><path d="M-1.5 -3.5 A3.5 3.5 0 0 1 -1.5 3.5" stroke="#d0d4d9" stroke-width="0.9" fill="none" /></g></svg>
<svg class="a" style="left:844px;top:39px" width="16" height="16" viewBox="-8 -8 16 16"><g transform="translate(0.5 0.5)"><path d="M-2 -1.5 Q1 -1.5 1.5 1.5" stroke="#d0d4d9" stroke-width="0.9" fill="none" /></g></svg>
<svg class="a" style="left:868px;top:39px" width="16" height="16" viewBox="-8 -8 16 16"><g transform="translate(0.5 0.5)"><path d="M-3 -4 Q3 -4 3.5 3" stroke="#d0d4d9" stroke-width="0.9" fill="none" /></g></svg>
<svg class="a" style="left:889px;top:39px" width="16" height="16" viewBox="-8 -8 16 16"><g transform="translate(0.5 0.5)"><path d="M-4 3.5 Q-4 -2 -1 0 Q2 2 3.5 -4" stroke="#d0d4d9" stroke-width="0.9" fill="none" /><rect x="-5" y="-5" width="2" height="2" stroke="#d0d4d9" stroke-width="0.8" fill="none"/><rect x="2.5" y="-5" width="2" height="2" stroke="#d0d4d9" stroke-width="0.8" fill="none"/><circle cx="-4" cy="4" r="1" stroke="#d0d4d9" stroke-width="0.8" fill="none"/><circle cx="3.5" cy="3.5" r="1" stroke="#d0d4d9" stroke-width="0.8" fill="none"/><circle cx="0" cy="0" r="1" stroke="#d0d4d9" stroke-width="0.8" fill="none"/></g></svg>
<svg class="a" style="left:905px;top:39px" width="16" height="16" viewBox="-8 -8 16 16"><g transform="translate(0.5 0.5)"><ellipse cx="0" cy="0" rx="5" ry="3.5" stroke="#d0d4d9" stroke-width="1" fill="none"/><path d="M-5 0 H5 M0 -3.5 V3.5" stroke="#d0d4d9" stroke-width="0.9" fill="none" /></g></svg>
<svg class="a" style="left:928px;top:39px" width="16" height="16" viewBox="-8 -8 16 16"><g transform="translate(0.5 0.5)"><path d="M-2 -4 H2 L4 0 L2 4 H-2 L-4 0 Z" stroke="#d0d4d9" stroke-width="0.9" fill="none" /></g></svg>
<svg class="a" style="left:954px;top:39px" width="16" height="16" viewBox="-8 -8 16 16"><g transform="translate(0.5 0.5)"><rect x="-4.5" y="-4.5" width="9" height="9" stroke="#d0d4d9" stroke-width="0.9" fill="none"/><path d="M-3 3 L-1 0 L1 2 L3 -2 M1 -3 L3 -4" stroke="#d0d4d9" stroke-width="0.9" fill="none" /></g></svg>
<svg class="a" style="left:972px;top:39px" width="16" height="16" viewBox="-8 -8 16 16"><g transform="translate(0.5 0.5)"><rect x="-4.5" y="-5" width="9" height="9" stroke="#d0d4d9" stroke-width="0.9" fill="none"/><path d="M-3 2 L0 -2 L3 2 M2 -4 L3 -5" stroke="#d0d4d9" stroke-width="0.9" fill="none" /><circle cx="-1" cy="4.5" r="1.3" stroke="#d0d4d9" stroke-width="0.8" fill="none"/><circle cx="1.5" cy="4.5" r="1.3" stroke="#d0d4d9" stroke-width="0.8" fill="none"/></g></svg>
<svg class="a" style="left:990px;top:39px" width="16" height="16" viewBox="-8 -8 16 16"><g transform="translate(0.5 0.5)"><path d="M-5 -3 V3 M5 -3 V3 M-5 -2 H5 M-5 2 H5" stroke="#d0d4d9" stroke-width="0.9" fill="none" /></g></svg>
<svg class="a" style="left:1008px;top:39px" width="16" height="16" viewBox="-8 -8 16 16"><g transform="translate(0.5 0.5)"><path d="M-4 -3 H3 V3" stroke="#d0d4d9" stroke-width="0.9" fill="none" /><rect x="-5" y="-4" width="2" height="2" stroke="#d0d4d9" stroke-width="0" fill="#d0d4d9"/><rect x="2" y="2" width="2" height="2" stroke="#d0d4d9" stroke-width="0" fill="#d0d4d9"/></g></svg>
<div class="a" style="left:616px;top:41px;width:12.5px;height:13px;background:#ffffff;"></div>
<svg class="a" style="left:399.5px;top:43.5px" width="16" height="16" viewBox="-8 -8 16 16"><rect x="-0.8" y="-0.8" width="1.6" height="1.6" fill="#d0d4d9"/></svg>
<svg class="a" style="left:422px;top:43.5px" width="16" height="16" viewBox="-8 -8 16 16"><rect x="-0.8" y="-0.8" width="1.6" height="1.6" fill="#d0d4d9"/></svg>
<svg class="a" style="left:444.5px;top:43.5px" width="16" height="16" viewBox="-8 -8 16 16"><rect x="-0.8" y="-0.8" width="1.6" height="1.6" fill="#d0d4d9"/></svg>
<svg class="a" style="left:467px;top:43.5px" width="16" height="16" viewBox="-8 -8 16 16"><rect x="-0.8" y="-0.8" width="1.6" height="1.6" fill="#d0d4d9"/></svg>
<svg class="a" style="left:489.5px;top:43.5px" width="16" height="16" viewBox="-8 -8 16 16"><rect x="-0.8" y="-0.8" width="1.6" height="1.6" fill="#d0d4d9"/></svg>
<svg class="a" style="left:534.5px;top:43.5px" width="16" height="16" viewBox="-8 -8 16 16"><rect x="-0.8" y="-0.8" width="1.6" height="1.6" fill="#d0d4d9"/></svg>
<svg class="a" style="left:557px;top:43.5px" width="16" height="16" viewBox="-8 -8 16 16"><rect x="-0.8" y="-0.8" width="1.6" height="1.6" fill="#d0d4d9"/></svg>
<svg class="a" style="left:579px;top:43.5px" width="16" height="16" viewBox="-8 -8 16 16"><rect x="-0.8" y="-0.8" width="1.6" height="1.6" fill="#d0d4d9"/></svg>
<svg class="a" style="left:602px;top:43.5px" width="16" height="16" viewBox="-8 -8 16 16"><rect x="-0.8" y="-0.8" width="1.6" height="1.6" fill="#d0d4d9"/></svg>
<svg class="a" style="left:624px;top:43.5px" width="16" height="16" viewBox="-8 -8 16 16"><rect x="-0.8" y="-0.8" width="1.6" height="1.6" fill="#d0d4d9"/></svg>
<svg class="a" style="left:704px;top:43.5px" width="16" height="16" viewBox="-8 -8 16 16"><rect x="-0.8" y="-0.8" width="1.6" height="1.6" fill="#d0d4d9"/></svg>
<svg class="a" style="left:727px;top:43.5px" width="16" height="16" viewBox="-8 -8 16 16"><rect x="-0.8" y="-0.8" width="1.6" height="1.6" fill="#d0d4d9"/></svg>
<svg class="a" style="left:787px;top:43.5px" width="16" height="16" viewBox="-8 -8 16 16"><rect x="-0.8" y="-0.8" width="1.6" height="1.6" fill="#d0d4d9"/></svg>
<svg class="a" style="left:809px;top:43.5px" width="16" height="16" viewBox="-8 -8 16 16"><rect x="-0.8" y="-0.8" width="1.6" height="1.6" fill="#d0d4d9"/></svg>
<svg class="a" style="left:831px;top:43.5px" width="16" height="16" viewBox="-8 -8 16 16"><rect x="-0.8" y="-0.8" width="1.6" height="1.6" fill="#d0d4d9"/></svg>
<svg class="a" style="left:854px;top:43.5px" width="16" height="16" viewBox="-8 -8 16 16"><rect x="-0.8" y="-0.8" width="1.6" height="1.6" fill="#d0d4d9"/></svg>
<svg class="a" style="left:876px;top:43.5px" width="16" height="16" viewBox="-8 -8 16 16"><rect x="-0.8" y="-0.8" width="1.6" height="1.6" fill="#d0d4d9"/></svg>
<svg class="a" style="left:916px;top:43.5px" width="16" height="16" viewBox="-8 -8 16 16"><rect x="-0.8" y="-0.8" width="1.6" height="1.6" fill="#d0d4d9"/></svg>
<svg class="a" style="left:938px;top:43.5px" width="16" height="16" viewBox="-8 -8 16 16"><rect x="-0.8" y="-0.8" width="1.6" height="1.6" fill="#d0d4d9"/></svg>
<svg class="a" style="left:0.5px;top:58px" width="16" height="16" viewBox="-8 -8 16 16"><rect x="-0.5" y="-4.5" width="1" height="1" fill="#5d6670"/><rect x="-0.5" y="-0.5" width="1" height="1" fill="#5d6670"/><rect x="-0.5" y="3.5" width="1" height="1" fill="#5d6670"/></svg>
<svg class="a" style="left:12px;top:58px" width="16" height="16" viewBox="-8 -8 16 16"><g transform="translate(0.5 0.5)"><rect x="-4" y="-4" width="8" height="8" stroke="#d0d4d9" stroke-width="0.9" fill="none"/><path d="M0 -4 V4 M-2 0 H2 M-4 3 H4" stroke="#d0d4d9" stroke-width="0.9" fill="none" /></g></svg>
<svg class="a" style="left:28px;top:58px" width="16" height="16" viewBox="-8 -8 16 16"><g transform="translate(0.5 0.5)"><rect x="-4" y="-4" width="8" height="8" stroke="#d0d4d9" stroke-width="0.9" fill="none"/><path d="M-2 -4 V4" stroke="#d0d4d9" stroke-width="0.9" fill="none" /></g></svg>
<svg class="a" style="left:45px;top:58px" width="16" height="16" viewBox="-8 -8 16 16"><g transform="translate(0.5 0.5)"><rect x="-3.5" y="-5.5" width="7" height="11" stroke="#d0d4d9" stroke-width="1.1" fill="none"/><path d="M2 -1 V1" stroke="#d0d4d9" stroke-width="0.9" fill="none" /></g></svg>
<svg class="a" style="left:62px;top:58px" width="16" height="16" viewBox="-8 -8 16 16"><g transform="translate(0.5 0.5)"><path d="M-3.5 -3.5 L3 -2.5 V4 L-3.5 4.5 Z M-3.5 -3.5 L-2 -5 H1.5 L3 -2.5" stroke="#d0d4d9" stroke-width="0.9" fill="none" /></g></svg>
<svg class="a" style="left:80px;top:58px" width="16" height="16" viewBox="-8 -8 16 16"><g transform="translate(0.5 0.5)"><rect x="-2.5" y="-4" width="5" height="8" stroke="#d0d4d9" stroke-width="0.9" fill="none"/></g></svg>
<svg class="a" style="left:97px;top:58px" width="16" height="16" viewBox="-8 -8 16 16"><g transform="translate(0.5 0.5)"><path d="M-5 -1 H-2 V1.5 H2 V-1 H5" stroke="#d0d4d9" stroke-width="0.9" fill="none" /></g></svg>
<svg class="a" style="left:114px;top:58px" width="16" height="16" viewBox="-8 -8 16 16"><g transform="translate(0.5 0.5)"><path d="M-5 -2 H5 M-5 2 H5 M-2 -5 V5 M2 -5 V5" stroke="#d0d4d9" stroke-width="1.2" fill="none" /></g></svg>
<svg class="a" style="left:131px;top:58px" width="16" height="16" viewBox="-8 -8 16 16"><g transform="translate(0.5 0.5)"><path d="M-5 -2 H5 M-5 2 H5 M-2.5 -5 V5 M-1 -5 V5 M1 -5 V5 M2.5 -5 V5" stroke="#d0d4d9" stroke-width="1" fill="none" /></g></svg>
<svg class="a" style="left:148px;top:58px" width="16" height="16" viewBox="-8 -8 16 16"><g transform="translate(0.5 0.5)"><path d="M-5 -2.5 H5 M-4 0 H4 M-5 2.5 H5 M-2 -5 V5 M2 -4 V4" stroke="#d0d4d9" stroke-width="1" fill="none" /></g></svg>
<svg class="a" style="left:164px;top:58px" width="16" height="16" viewBox="-8 -8 16 16"><g transform="translate(0.5 0.5)"><rect x="-5.5" y="-4.5" width="11" height="9" stroke="#d0d4d9" stroke-width="1" fill="none"/><rect x="-4" y="-3" width="8" height="6" stroke="#d0d4d9" stroke-width="0.8" fill="none"/></g></svg>
<svg class="a" style="left:185px;top:58px" width="16" height="16" viewBox="-8 -8 16 16"><g transform="translate(0.5 0.5)"><path d="M-4 3 L2 -3 L4 -1 L-2 5 Z M-2 1 L0 3" stroke="#d0d4d9" stroke-width="0.9" fill="none" /></g></svg>
<svg class="a" style="left:202px;top:58px" width="16" height="16" viewBox="-8 -8 16 16"><g transform="translate(0.5 0.5)"><path d="M-4 3 L2 -3 L4 -1 L-2 5 Z M-2 1 L0 3" stroke="#d0d4d9" stroke-width="0.9" fill="none" /><path d="M-1 -5 L0 -3 M1 -5 L0 -3" stroke="#d0d4d9" stroke-width="0.7" fill="none" /></g></svg>
<svg class="a" style="left:219px;top:58px" width="16" height="16" viewBox="-8 -8 16 16"><g transform="translate(0.5 0.5)"><path d="M-5 -3 L-2 -1 L3 2 L5 3 M-3 -2 L1 0 L4 3" stroke="#d0d4d9" stroke-width="0.9" fill="none" /><circle cx="0" cy="0.5" r="1.8" stroke="#d0d4d9" stroke-width="0.9" fill="none"/></g></svg>
<svg class="a" style="left:239px;top:58px" width="16" height="16" viewBox="-8 -8 16 16"><g transform="translate(0.5 0.5)"><path d="M0 -4.5 L4.5 4 H-4.5 Z M0 -1 V1.5 M-2 2.5 H2" stroke="#d0d4d9" stroke-width="0.9" fill="none" /></g></svg>
<svg class="a" style="left:257px;top:58px" width="16" height="16" viewBox="-8 -8 16 16"><g transform="translate(0.5 0.5)"><circle cx="0" cy="0" r="2" stroke="#d0d4d9" stroke-width="0.9" fill="none"/><path d="M-4 0 L-2 -3 H2 L4 0 L2 3 H-2 Z" stroke="#d0d4d9" stroke-width="0.9" fill="none" /></g></svg>
<svg class="a" style="left:273px;top:58px" width="16" height="16" viewBox="-8 -8 16 16"><g transform="translate(0.5 0.5)"><rect x="-4.5" y="-2.5" width="9" height="6" stroke="#d0d4d9" stroke-width="0.9" fill="none"/><path d="M-3 -2.5 V-4 M3 -2.5 V-4 M-4.5 0 H4.5" stroke="#d0d4d9" stroke-width="0.9" fill="none" /></g></svg>
<svg class="a" style="left:395px;top:58px" width="16" height="16" viewBox="-8 -8 16 16"><g transform="translate(0.5 0.5)"><path d="M-4 -3.5 H3.5 V3.5 H-4 M-4 -1 H1 V1 H-4" stroke="#d0d4d9" stroke-width="1" fill="none" /></g></svg>
<svg class="a" style="left:413px;top:58px" width="16" height="16" viewBox="-8 -8 16 16"><g transform="translate(0.5 0.5)"><path d="M-4.5 -4.5 H0.5 V3.5 H-4.5 Z M-1.5 -2.5 H3.5 V5.5 H-1.5" stroke="#d0d4d9" stroke-width="1" fill="none" /><rect x="-1" y="-2" width="2" height="5.5" stroke="none" stroke-width="0" fill="#3fdf3f"/></g></svg>
<svg class="a" style="left:432px;top:58px" width="16" height="16" viewBox="-8 -8 16 16"><g transform="translate(0.5 0.5)"><path d="M-5.5 0.5 H2.5 V-3.5 H4" stroke="#d0d4d9" stroke-width="1" fill="none" /><path d="M-5 1.5 H-3 V3.5 H-5 Z M-2 1.5 H0 V3.5 H-2 Z M3.5 -5 H5.5 V-3 H3.5 Z" fill="#d0d4d9"/><path d="M0 3.2 L1.4 4.6 L4.2 1.6" stroke="#3cc83c" stroke-width="1.1" fill="none" /></g></svg>
<svg class="a" style="left:451px;top:58px" width="16" height="16" viewBox="-8 -8 16 16"><g transform="translate(0.5 0.5)"><path d="M-5.5 0.5 H2.5 V-3.5 H4" stroke="#d0d4d9" stroke-width="1" fill="none" /><path d="M-5 1.5 H-3 V3.5 H-5 Z M-2 1.5 H0 V3.5 H-2 Z M3.5 -5 H5.5 V-3 H3.5 Z" fill="#d0d4d9"/></g></svg>
<svg class="a" style="left:470px;top:58px" width="16" height="16" viewBox="-8 -8 16 16"><g transform="translate(0.5 0.5)"><rect x="-4.5" y="-4.5" width="7" height="3" stroke="#d0d4d9" stroke-width="0.9" fill="none"/><rect x="-4.5" y="-1.5" width="9" height="3" stroke="#d0d4d9" stroke-width="0.9" fill="none"/><rect x="-2.5" y="1.5" width="5" height="3" stroke="#d0d4d9" stroke-width="0.9" fill="none"/><circle cx="4" cy="4.5" r="1.6" stroke="#2ac82a" stroke-width="1" fill="none"/></g></svg>
<svg class="a" style="left:490px;top:58px" width="16" height="16" viewBox="-8 -8 16 16"><g transform="translate(0.5 0.5)"><path d="M-4.5 -2 L0 -4.5 L4.5 -2 L0 0.5 Z" fill="#4ddb4d"/><path d="M-4.5 0 L0 2.5 L4.5 0 M-4.5 2 L0 4.5 L4.5 2 M5.5 -2.5 V5.5 H1" stroke="#d0d4d9" stroke-width="0.9" fill="none" /></g></svg>
<div class="a" style="left:0px;top:75px;width:2px;height:530px;background:#14202c;"></div>
<div class="a" style="left:2px;top:75.5px;width:149px;height:16.5px;background:#37434f;"></div>
<div class="a" style="left:2px;top:92px;width:149px;height:513px;background:#2e3b47;"></div>
<div class="t" style="left:7.8px;top:80.63px;font-size:7px;line-height:7px;color:#dfe3e8;font-weight:normal;font-family:'Liberation Sans';transform:scaleX(0.85);transform-origin:0 0;">Project Explorer</div>
<svg class="a" style="left:111px;top:78.8px" width="36" height="10" viewBox="0 0 36 10">
<path d="M2 3.5 L4.5 6 L7 3.5" stroke="#d6dae0" stroke-width="1" fill="none"/>
<path d="M15.5 1.5 H18.5 M16 1.5 V5 M18 1.5 V5 M15 5 H19 M17 5 V8.5" stroke="#c8cdd3" stroke-width="0.9" fill="none"/>
<path d="M30.3 2 L34.8 6.5 M34.8 2 L30.3 6.5" stroke="#f0f2f4" stroke-width="1.3" fill="none"/>
</svg>
<svg class="a" style="left:8px;top:96px" width="62" height="14" viewBox="0 0 62 14">
<path d="M3.8 5 H7.2 L5.5 8 Z" fill="#e8ebee"/>
<path d="M17 4 V10.5 H26.5 M17 4 H20 L21 5 H26 V10.5" stroke="#d3d7dc" fill="none" stroke-width="0.9"/>
<path d="M18.5 6.5 H25 M18.5 8.5 H25" stroke="#d3d7dc" stroke-width="0.8"/>
<path d="M20 11.5 H27.5 V6" stroke="#d3d7dc" fill="none" stroke-width="0.8"/>
<path d="M41 5 A3.6 3.6 0 1 0 41.5 9.5" stroke="#d3d7dc" fill="none" stroke-width="0.9"/>
<path d="M39.5 3.2 L43 3.5 L41.8 6.5 Z" fill="#eef0f2"/>
<path d="M50 3 H55 V9.5 H50 Z M52 5 H57 V11.5 H52 Z" stroke="#d3d7dc" fill="#2e3b47" stroke-width="0.9"/>
<path d="M53.5 8.5 H55.5" stroke="#d3d7dc" stroke-width="0.9"/>
</svg>
<div class="a" style="left:4.5px;top:111.5px;width:144px;height:468px;border:1px solid #3e4955;border-bottom:none"></div>
<div class="a" style="left:5px;top:580.5px;width:143px;height:10px;background:#f0f0f0;"></div>
<div class="a" style="left:15px;top:581.5px;width:122px;height:8px;background:#cdcdcd;"></div>
<svg class="a" style="left:5px;top:580.5px" width="143" height="10" viewBox="0 0 143 10"><path d="M6 3 L4 5 L6 7" stroke="#555" fill="none" stroke-width="0.9"/><path d="M137 3 L139 5 L137 7" stroke="#555" fill="none" stroke-width="0.9"/></svg>
<div class="a" style="left:3px;top:591px;width:147px;height:13px;background:#1a2531;"></div>
<div class="a" style="left:3px;top:591px;width:54px;height:13px;background:#27323d;"></div>
<div class="a" style="left:57px;top:591px;width:44px;height:13px;background:#384350;"></div>
<svg class="a" style="left:4px;top:592.5px" width="9" height="10" viewBox="0 0 9 10"><path d="M1.5 1 H5.5 V7.5 H1.5 Z" stroke="#aeb4ba" fill="none" stroke-width="0.9"/><path d="M2.5 3 H4.5 M2.5 5 H4.5" stroke="#aeb4ba" stroke-width="0.7"/><circle cx="6.5" cy="7.5" r="1.6" fill="#aeb4ba"/></svg>
<svg class="a" style="left:62px;top:592.5px" width="9" height="10" viewBox="0 0 9 10"><path d="M1.5 1 H5.5 V7.5 H1.5 Z" stroke="#aeb4ba" fill="none" stroke-width="0.9"/><path d="M2.5 3 H4.5 M2.5 5 H4.5" stroke="#aeb4ba" stroke-width="0.7"/><circle cx="6.5" cy="7.5" r="1.6" fill="#aeb4ba"/></svg>
<div class="t" style="left:13px;top:594.23px;font-size:7px;line-height:7px;color:#e3e7eb;font-weight:normal;font-family:'Liberation Sans';transform:scaleX(0.85);transform-origin:0 0;">Project Explorer</div>
<div class="t" style="left:70.5px;top:594.23px;font-size:7px;line-height:7px;color:#e3e7eb;font-weight:normal;font-family:'Liberation Sans';transform:scaleX(0.85);transform-origin:0 0;">Properties</div>
<div class="a" style="left:11px;top:121.5px;width:0.8px;height:339px;background:#4b5560;"></div>
<div class="a" style="left:21px;top:134px;width:0.8px;height:252px;background:#4b5560;"></div>
<div class="a" style="left:31.5px;top:208px;width:0.8px;height:0px;background:#4b5560;"></div>
<div class="a" style="left:42px;top:220px;width:0.8px;height:38px;background:#4b5560;"></div>
<div class="a" style="left:52px;top:230px;width:0.8px;height:17px;background:#4b5560;"></div>
<div class="a" style="left:11px;top:133px;width:0.8px;height:0px;background:#4b5560;"></div>
<div class="a" style="left:31.5px;top:273px;width:0.8px;height:5px;background:#4b5560;"></div>
<div class="a" style="left:14.5px;top:118.4px;width:3px;height:0.8px;background:#4b5560;"></div>
<svg class="a" style="left:8.5px;top:115.4px" width="6" height="6" viewBox="0 0 6 6"><rect x="0.5" y="0.5" width="5" height="5" fill="#e4e7ec" stroke="#9aa2ab" stroke-width="0.6"/><path d="M1.6 3 H4.4" stroke="#203a80" stroke-width="0.8"/><path d="M3 1.6 V4.4" stroke="#203a80" stroke-width="0.8"/></svg>
<svg class="a" style="left:17.5px;top:113.9px" width="9" height="9" viewBox="0 0 9 9"><path d="M0.5 1 H3.5 L4.5 2 H8.5 V7.5 H0.5 Z" fill="#eef0f2"/></svg>
<div class="t" style="left:28.8px;top:115.03px;font-size:7px;line-height:7px;color:#e3e7eb;font-weight:normal;font-family:'Liberation Sans';transform:scaleX(0.82);transform-origin:0 0;">DEMO Project</div>
<div class="a" style="left:14.5px;top:129.08px;width:3px;height:0.8px;background:#4b5560;"></div>
<svg class="a" style="left:8.5px;top:126.08000000000001px" width="6" height="6" viewBox="0 0 6 6"><rect x="0.5" y="0.5" width="5" height="5" fill="#e4e7ec" stroke="#9aa2ab" stroke-width="0.6"/><path d="M1.6 3 H4.4" stroke="#203a80" stroke-width="0.8"/></svg>
<svg class="a" style="left:17.5px;top:124.58000000000001px" width="9" height="9" viewBox="0 0 9 9"><path d="M0.5 7.5 V1.5 H3 L4 2.5 H7.5 V4 M0.5 7.5 L2 4 H8.5 L7 7.5 Z" fill="none" stroke="#d3d7dc" stroke-width="0.8"/></svg>
<div class="t" style="left:28.8px;top:125.71px;font-size:7px;line-height:7px;color:#e3e7eb;font-weight:bold;font-family:'Liberation Sans';transform:scaleX(0.92);transform-origin:0 0;">DEMO Project 1</div>
<div class="a" style="left:24.8px;top:139.76px;width:3px;height:0.8px;background:#4b5560;"></div>
<svg class="a" style="left:18.8px;top:136.76px" width="6" height="6" viewBox="0 0 6 6"><rect x="0.5" y="0.5" width="5" height="5" fill="#e4e7ec" stroke="#9aa2ab" stroke-width="0.6"/><path d="M1.6 3 H4.4" stroke="#203a80" stroke-width="0.8"/><path d="M3 1.6 V4.4" stroke="#203a80" stroke-width="0.8"/></svg>
<svg class="a" style="left:27.8px;top:135.26px" width="9" height="9" viewBox="0 0 9 9"><path d="M1 0.5 H6.5 V8.5 H1 Z" fill="none" stroke="#c9ced4" stroke-width="0.8"/><path d="M1 3 H6.5" stroke="#c9ced4" stroke-width="0.8"/></svg>
<div class="t" style="left:39.1px;top:136.39px;font-size:7px;line-height:7px;color:#e3e7eb;font-weight:normal;font-family:'Liberation Sans';transform:scaleX(0.82);transform-origin:0 0;">Cover sheet</div>
<div class="a" style="left:24.8px;top:150.44px;width:3px;height:0.8px;background:#4b5560;"></div>
<svg class="a" style="left:18.8px;top:147.44px" width="6" height="6" viewBox="0 0 6 6"><rect x="0.5" y="0.5" width="5" height="5" fill="#e4e7ec" stroke="#9aa2ab" stroke-width="0.6"/><path d="M1.6 3 H4.4" stroke="#203a80" stroke-width="0.8"/><path d="M3 1.6 V4.4" stroke="#203a80" stroke-width="0.8"/></svg>
<svg class="a" style="left:27.8px;top:145.94px" width="9" height="9" viewBox="0 0 9 9"><path d="M1 0.5 H6.5 V8.5 H1 Z" fill="none" stroke="#c9ced4" stroke-width="0.8"/><path d="M1 3 H6.5" stroke="#c9ced4" stroke-width="0.8"/></svg>
<div class="t" style="left:39.1px;top:147.07px;font-size:7px;line-height:7px;color:#e3e7eb;font-weight:normal;font-family:'Liberation Sans';transform:scaleX(0.82);transform-origin:0 0;">Technical Datasheets</div>
<div class="a" style="left:24.8px;top:161.12px;width:3px;height:0.8px;background:#4b5560;"></div>
<svg class="a" style="left:18.8px;top:158.12px" width="6" height="6" viewBox="0 0 6 6"><rect x="0.5" y="0.5" width="5" height="5" fill="#e4e7ec" stroke="#9aa2ab" stroke-width="0.6"/><path d="M1.6 3 H4.4" stroke="#203a80" stroke-width="0.8"/><path d="M3 1.6 V4.4" stroke="#203a80" stroke-width="0.8"/></svg>
<svg class="a" style="left:27.8px;top:156.62px" width="9" height="9" viewBox="0 0 9 9"><path d="M1 0.5 H6.5 V8.5 H1 Z" fill="none" stroke="#c9ced4" stroke-width="0.8"/><path d="M2.3 3 H5.3 M2.3 5 H5.3 M2.3 7 H5.3" stroke="#c9ced4" stroke-width="0.6"/></svg>
<div class="t" style="left:39.1px;top:157.75px;font-size:7px;line-height:7px;color:#e3e7eb;font-weight:normal;font-family:'Liberation Sans';transform:scaleX(0.82);transform-origin:0 0;">Summary</div>
<div class="a" style="left:24.8px;top:171.8px;width:3px;height:0.8px;background:#4b5560;"></div>
<svg class="a" style="left:18.8px;top:168.8px" width="6" height="6" viewBox="0 0 6 6"><rect x="0.5" y="0.5" width="5" height="5" fill="#e4e7ec" stroke="#9aa2ab" stroke-width="0.6"/><path d="M1.6 3 H4.4" stroke="#203a80" stroke-width="0.8"/><path d="M3 1.6 V4.4" stroke="#203a80" stroke-width="0.8"/></svg>
<svg class="a" style="left:27.8px;top:167.3px" width="9" height="9" viewBox="0 0 9 9"><circle cx="4.5" cy="3" r="1.8" fill="none" stroke="#c9ced4" stroke-width="0.8"/><path d="M0.5 8.5 Q4.5 3 8.5 8.5 Z" fill="none" stroke="#c9ced4" stroke-width="0.8"/></svg>
<div class="t" style="left:39.1px;top:168.43px;font-size:7px;line-height:7px;color:#e3e7eb;font-weight:normal;font-family:'Liberation Sans';transform:scaleX(0.82);transform-origin:0 0;">Graphics</div>
<div class="a" style="left:24.8px;top:182.48000000000002px;width:3px;height:0.8px;background:#4b5560;"></div>
<svg class="a" style="left:18.8px;top:179.48000000000002px" width="6" height="6" viewBox="0 0 6 6"><rect x="0.5" y="0.5" width="5" height="5" fill="#e4e7ec" stroke="#9aa2ab" stroke-width="0.6"/><path d="M1.6 3 H4.4" stroke="#203a80" stroke-width="0.8"/><path d="M3 1.6 V4.4" stroke="#203a80" stroke-width="0.8"/></svg>
<svg class="a" style="left:27.8px;top:177.98000000000002px" width="9" height="9" viewBox="0 0 9 9"><rect x="0.5" y="0.5" width="7.5" height="8" fill="#f29a12"/><path d="M3 2 V7 M5.5 2 V7" stroke="#4a4a10" stroke-width="0.7"/></svg>
<div class="t" style="left:39.1px;top:179.11px;font-size:7px;line-height:7px;color:#e3e7eb;font-weight:normal;font-family:'Liberation Sans';transform:scaleX(0.82);transform-origin:0 0;">Single-line schematic</div>
<div class="a" style="left:24.8px;top:193.16px;width:3px;height:0.8px;background:#4b5560;"></div>
<svg class="a" style="left:18.8px;top:190.16px" width="6" height="6" viewBox="0 0 6 6"><rect x="0.5" y="0.5" width="5" height="5" fill="#e4e7ec" stroke="#9aa2ab" stroke-width="0.6"/><path d="M1.6 3 H4.4" stroke="#203a80" stroke-width="0.8"/></svg>
<svg class="a" style="left:27.8px;top:188.66px" width="9" height="9" viewBox="0 0 9 9"><path d="M0.5 2 H3 L4 3 H8 V7.5 H0.5 Z" fill="none" stroke="#c9ced4" stroke-width="0.8"/></svg>
<div class="t" style="left:39.1px;top:189.79px;font-size:7px;line-height:7px;color:#e3e7eb;font-weight:normal;font-family:'Liberation Sans';transform:scaleX(0.82);transform-origin:0 0;">Subprojects</div>
<div class="a" style="left:35.1px;top:203.84px;width:3px;height:0.8px;background:#4b5560;"></div>
<svg class="a" style="left:29.1px;top:200.84px" width="6" height="6" viewBox="0 0 6 6"><rect x="0.5" y="0.5" width="5" height="5" fill="#e4e7ec" stroke="#9aa2ab" stroke-width="0.6"/><path d="M1.6 3 H4.4" stroke="#203a80" stroke-width="0.8"/></svg>
<svg class="a" style="left:38.1px;top:199.34px" width="9" height="9" viewBox="0 0 9 9"><path d="M0.5 2 H3 L4 3 H8 V7.5 H0.5 Z" fill="none" stroke="#c9ced4" stroke-width="0.8"/></svg>
<div class="t" style="left:49.400000000000006px;top:200.47px;font-size:7px;line-height:7px;color:#e3e7eb;font-weight:normal;font-family:'Liberation Sans';transform:scaleX(0.82);transform-origin:0 0;">=A1</div>
<div class="a" style="left:45.400000000000006px;top:214.52px;width:3px;height:0.8px;background:#4b5560;"></div>
<svg class="a" style="left:39.400000000000006px;top:211.52px" width="6" height="6" viewBox="0 0 6 6"><rect x="0.5" y="0.5" width="5" height="5" fill="#e4e7ec" stroke="#9aa2ab" stroke-width="0.6"/><path d="M1.6 3 H4.4" stroke="#203a80" stroke-width="0.8"/></svg>
<svg class="a" style="left:48.400000000000006px;top:210.02px" width="9" height="9" viewBox="0 0 9 9"><path d="M0.5 2 H3 L4 3 H8 V7.5 H0.5 Z" fill="none" stroke="#c9ced4" stroke-width="0.8"/></svg>
<div class="t" style="left:59.7px;top:211.15px;font-size:7px;line-height:7px;color:#e3e7eb;font-weight:normal;font-family:'Liberation Sans';transform:scaleX(0.82);transform-origin:0 0;">+ST</div>
<div class="a" style="left:55.7px;top:225.2px;width:3px;height:0.8px;background:#4b5560;"></div>
<svg class="a" style="left:49.7px;top:222.2px" width="6" height="6" viewBox="0 0 6 6"><rect x="0.5" y="0.5" width="5" height="5" fill="#e4e7ec" stroke="#9aa2ab" stroke-width="0.6"/><path d="M1.6 3 H4.4" stroke="#203a80" stroke-width="0.8"/></svg>
<svg class="a" style="left:58.7px;top:220.7px" width="9" height="9" viewBox="0 0 9 9"><rect x="0.5" y="0.5" width="7.5" height="8" fill="#c9cc12"/><path d="M3 2 V7 M5.5 2 V7" stroke="#4a4a10" stroke-width="0.7"/></svg>
<div class="t" style="left:70.0px;top:221.83px;font-size:7px;line-height:7px;color:#e3e7eb;font-weight:normal;font-family:'Liberation Sans';transform:scaleX(0.82);transform-origin:0 0;">Cabinet</div>
<div class="a" style="left:62px;top:230.88px;width:0.8px;height:5px;background:#4b5560;"></div>
<div class="a" style="left:62px;top:235.88px;width:6px;height:0.8px;background:#4b5560;"></div>
<div class="a" style="left:78.4px;top:230.57999999999998px;width:57px;height:10.5px;background:#1b2631;"></div>
<div class="t" style="left:79px;top:232.51px;font-size:7px;line-height:7px;color:#eef1f4;font-weight:normal;font-family:'Liberation Sans';transform:scaleX(0.82);transform-origin:0 0;">0001 : Cabinet design</div>
<div class="a" style="left:55.7px;top:246.56px;width:3px;height:0.8px;background:#4b5560;"></div>
<svg class="a" style="left:49.7px;top:243.56px" width="6" height="6" viewBox="0 0 6 6"><rect x="0.5" y="0.5" width="5" height="5" fill="#e4e7ec" stroke="#9aa2ab" stroke-width="0.6"/><path d="M1.6 3 H4.4" stroke="#203a80" stroke-width="0.8"/><path d="M3 1.6 V4.4" stroke="#203a80" stroke-width="0.8"/></svg>
<svg class="a" style="left:58.7px;top:242.06px" width="9" height="9" viewBox="0 0 9 9"><rect x="0.5" y="0.5" width="7.5" height="8" fill="#f29a12"/><path d="M3 2 V7 M5.5 2 V7" stroke="#4a4a10" stroke-width="0.7"/></svg>
<div class="t" style="left:70.0px;top:243.19px;font-size:7px;line-height:7px;color:#e3e7eb;font-weight:normal;font-family:'Liberation Sans';transform:scaleX(0.82);transform-origin:0 0;">Schematics</div>
<div class="a" style="left:45.400000000000006px;top:257.24px;width:3px;height:0.8px;background:#4b5560;"></div>
<svg class="a" style="left:39.400000000000006px;top:254.24px" width="6" height="6" viewBox="0 0 6 6"><rect x="0.5" y="0.5" width="5" height="5" fill="#e4e7ec" stroke="#9aa2ab" stroke-width="0.6"/><path d="M1.6 3 H4.4" stroke="#203a80" stroke-width="0.8"/><path d="M3 1.6 V4.4" stroke="#203a80" stroke-width="0.8"/></svg>
<svg class="a" style="left:48.400000000000006px;top:252.74px" width="9" height="9" viewBox="0 0 9 9"><path d="M0.5 2 H3 L4 3 H8 V7.5 H0.5 Z" fill="none" stroke="#c9ced4" stroke-width="0.8"/></svg>
<div class="t" style="left:59.7px;top:253.87px;font-size:7px;line-height:7px;color:#e3e7eb;font-weight:normal;font-family:'Liberation Sans';transform:scaleX(0.82);transform-origin:0 0;">+P1</div>
<div class="a" style="left:24.8px;top:267.91999999999996px;width:3px;height:0.8px;background:#4b5560;"></div>
<svg class="a" style="left:18.8px;top:264.91999999999996px" width="6" height="6" viewBox="0 0 6 6"><rect x="0.5" y="0.5" width="5" height="5" fill="#e4e7ec" stroke="#9aa2ab" stroke-width="0.6"/><path d="M1.6 3 H4.4" stroke="#203a80" stroke-width="0.8"/></svg>
<svg class="a" style="left:27.8px;top:263.41999999999996px" width="9" height="9" viewBox="0 0 9 9"><rect x="0.5" y="0.5" width="7.5" height="8" fill="#12a8d8"/><path d="M3 2 V7 M5.5 2 V7" stroke="#4a4a10" stroke-width="0.7"/></svg>
<div class="t" style="left:39.1px;top:264.55px;font-size:7px;line-height:7px;color:#e3e7eb;font-weight:normal;font-family:'Liberation Sans';transform:scaleX(0.82);transform-origin:0 0;">Fluid</div>
<div class="a" style="left:31.5px;top:273.6px;width:0.8px;height:5px;background:#4b5560;"></div>
<div class="a" style="left:31.5px;top:278.6px;width:6px;height:0.8px;background:#4b5560;"></div>
<div class="t" style="left:48.6px;top:275.23px;font-size:7px;line-height:7px;color:#e3e7eb;font-weight:normal;font-family:'Liberation Sans';transform:scaleX(0.82);transform-origin:0 0;">0001 : Pneumatic plan punch up/down</div>
<div class="a" style="left:24.8px;top:289.28px;width:3px;height:0.8px;background:#4b5560;"></div>
<svg class="a" style="left:18.8px;top:286.28px" width="6" height="6" viewBox="0 0 6 6"><rect x="0.5" y="0.5" width="5" height="5" fill="#e4e7ec" stroke="#9aa2ab" stroke-width="0.6"/><path d="M1.6 3 H4.4" stroke="#203a80" stroke-width="0.8"/><path d="M3 1.6 V4.4" stroke="#203a80" stroke-width="0.8"/></svg>
<svg class="a" style="left:27.8px;top:284.78px" width="9" height="9" viewBox="0 0 9 9"><path d="M1 2.5 H6.5 V8.5 H1 Z M3 0.5 H8.5 V6.5" stroke="#c9ced4" fill="none" stroke-width="0.8"/><path d="M2 4.5 H5.5 M2 6.5 H5.5" stroke="#c9ced4" stroke-width="0.6"/></svg>
<div class="t" style="left:39.1px;top:285.91px;font-size:7px;line-height:7px;color:#e3e7eb;font-weight:normal;font-family:'Liberation Sans';transform:scaleX(0.82);transform-origin:0 0;">Reference chart</div>
<div class="a" style="left:24.8px;top:299.96000000000004px;width:3px;height:0.8px;background:#4b5560;"></div>
<svg class="a" style="left:18.8px;top:296.96000000000004px" width="6" height="6" viewBox="0 0 6 6"><rect x="0.5" y="0.5" width="5" height="5" fill="#e4e7ec" stroke="#9aa2ab" stroke-width="0.6"/><path d="M1.6 3 H4.4" stroke="#203a80" stroke-width="0.8"/><path d="M3 1.6 V4.4" stroke="#203a80" stroke-width="0.8"/></svg>
<svg class="a" style="left:27.8px;top:295.46000000000004px" width="9" height="9" viewBox="0 0 9 9"><path d="M1 2.5 H6.5 V8.5 H1 Z M3 0.5 H8.5 V6.5" stroke="#c9ced4" fill="none" stroke-width="0.8"/><path d="M2 4.5 H5.5 M2 6.5 H5.5" stroke="#c9ced4" stroke-width="0.6"/></svg>
<div class="t" style="left:39.1px;top:296.59px;font-size:7px;line-height:7px;color:#e3e7eb;font-weight:normal;font-family:'Liberation Sans';transform:scaleX(0.82);transform-origin:0 0;">Material list</div>
<div class="a" style="left:24.8px;top:310.64px;width:3px;height:0.8px;background:#4b5560;"></div>
<svg class="a" style="left:18.8px;top:307.64px" width="6" height="6" viewBox="0 0 6 6"><rect x="0.5" y="0.5" width="5" height="5" fill="#e4e7ec" stroke="#9aa2ab" stroke-width="0.6"/><path d="M1.6 3 H4.4" stroke="#203a80" stroke-width="0.8"/><path d="M3 1.6 V4.4" stroke="#203a80" stroke-width="0.8"/></svg>
<svg class="a" style="left:27.8px;top:306.14px" width="9" height="9" viewBox="0 0 9 9"><path d="M1 2.5 H6.5 V8.5 H1 Z M3 0.5 H8.5 V6.5" stroke="#c9ced4" fill="none" stroke-width="0.8"/><path d="M2 4.5 H5.5 M2 6.5 H5.5" stroke="#c9ced4" stroke-width="0.6"/></svg>
<div class="t" style="left:39.1px;top:307.27px;font-size:7px;line-height:7px;color:#e3e7eb;font-weight:normal;font-family:'Liberation Sans';transform:scaleX(0.82);transform-origin:0 0;">PLC plan</div>
<div class="a" style="left:24.8px;top:321.32px;width:3px;height:0.8px;background:#4b5560;"></div>
<svg class="a" style="left:18.8px;top:318.32px" width="6" height="6" viewBox="0 0 6 6"><rect x="0.5" y="0.5" width="5" height="5" fill="#e4e7ec" stroke="#9aa2ab" stroke-width="0.6"/><path d="M1.6 3 H4.4" stroke="#203a80" stroke-width="0.8"/><path d="M3 1.6 V4.4" stroke="#203a80" stroke-width="0.8"/></svg>
<svg class="a" style="left:27.8px;top:316.82px" width="9" height="9" viewBox="0 0 9 9"><path d="M3 1.5 H7.5 V7.5 H3 Z M1 4.5 H3" stroke="#c9ced4" fill="none" stroke-width="0.8"/><path d="M5 3 V6" stroke="#c9ced4" stroke-width="0.8"/></svg>
<div class="t" style="left:39.1px;top:317.95px;font-size:7px;line-height:7px;color:#e3e7eb;font-weight:normal;font-family:'Liberation Sans';transform:scaleX(0.82);transform-origin:0 0;">Terminal chart</div>
<div class="a" style="left:24.8px;top:332.0px;width:3px;height:0.8px;background:#4b5560;"></div>
<svg class="a" style="left:18.8px;top:329.0px" width="6" height="6" viewBox="0 0 6 6"><rect x="0.5" y="0.5" width="5" height="5" fill="#e4e7ec" stroke="#9aa2ab" stroke-width="0.6"/><path d="M1.6 3 H4.4" stroke="#203a80" stroke-width="0.8"/><path d="M3 1.6 V4.4" stroke="#203a80" stroke-width="0.8"/></svg>
<svg class="a" style="left:27.8px;top:327.5px" width="9" height="9" viewBox="0 0 9 9"><path d="M1 1 V8 M0 4.5 H3 M3 1.5 H8 V7.5 H3 Z M3 4.5 H8 M5.5 1.5 V7.5" stroke="#c9ced4" fill="none" stroke-width="0.7"/></svg>
<div class="t" style="left:39.1px;top:328.63px;font-size:7px;line-height:7px;color:#e3e7eb;font-weight:normal;font-family:'Liberation Sans';transform:scaleX(0.82);transform-origin:0 0;">Connector chart</div>
<div class="a" style="left:24.8px;top:342.68px;width:3px;height:0.8px;background:#4b5560;"></div>
<svg class="a" style="left:18.8px;top:339.68px" width="6" height="6" viewBox="0 0 6 6"><rect x="0.5" y="0.5" width="5" height="5" fill="#e4e7ec" stroke="#9aa2ab" stroke-width="0.6"/><path d="M1.6 3 H4.4" stroke="#203a80" stroke-width="0.8"/><path d="M3 1.6 V4.4" stroke="#203a80" stroke-width="0.8"/></svg>
<svg class="a" style="left:27.8px;top:338.18px" width="9" height="9" viewBox="0 0 9 9"><path d="M0.5 5 H2.5 M1.5 4 V8 M3 1.5 H7 L8 0.5 V7.5 H3 Z M4 3 H7 M4 5 H7" stroke="#c9ced4" fill="none" stroke-width="0.7"/></svg>
<div class="t" style="left:39.1px;top:339.31px;font-size:7px;line-height:7px;color:#e3e7eb;font-weight:normal;font-family:'Liberation Sans';transform:scaleX(0.82);transform-origin:0 0;">Cable list</div>
<div class="a" style="left:24.8px;top:353.36px;width:3px;height:0.8px;background:#4b5560;"></div>
<svg class="a" style="left:18.8px;top:350.36px" width="6" height="6" viewBox="0 0 6 6"><rect x="0.5" y="0.5" width="5" height="5" fill="#e4e7ec" stroke="#9aa2ab" stroke-width="0.6"/><path d="M1.6 3 H4.4" stroke="#203a80" stroke-width="0.8"/><path d="M3 1.6 V4.4" stroke="#203a80" stroke-width="0.8"/></svg>
<svg class="a" style="left:27.8px;top:348.86px" width="9" height="9" viewBox="0 0 9 9"><path d="M0.5 5 H2.5 M1.5 4 V8 M3 1.5 H7 L8 0.5 V7.5 H3 Z M4 3 H7 M4 5 H7" stroke="#c9ced4" fill="none" stroke-width="0.7"/></svg>
<div class="t" style="left:39.1px;top:349.99px;font-size:7px;line-height:7px;color:#e3e7eb;font-weight:normal;font-family:'Liberation Sans';transform:scaleX(0.82);transform-origin:0 0;">Cable chart</div>
<div class="a" style="left:24.8px;top:364.03999999999996px;width:3px;height:0.8px;background:#4b5560;"></div>
<svg class="a" style="left:18.8px;top:361.03999999999996px" width="6" height="6" viewBox="0 0 6 6"><rect x="0.5" y="0.5" width="5" height="5" fill="#e4e7ec" stroke="#9aa2ab" stroke-width="0.6"/><path d="M1.6 3 H4.4" stroke="#203a80" stroke-width="0.8"/><path d="M3 1.6 V4.4" stroke="#203a80" stroke-width="0.8"/></svg>
<svg class="a" style="left:27.8px;top:359.53999999999996px" width="9" height="9" viewBox="0 0 9 9"><path d="M1 1 V8 M0.5 1 H1.5 M0.5 8 H1.5 M3 0.5 H8.5 V5.5 H3 Z M4 2 H7.5 M4 3.5 H7.5" stroke="#c9ced4" fill="none" stroke-width="0.7"/></svg>
<div class="t" style="left:39.1px;top:360.67px;font-size:7px;line-height:7px;color:#e3e7eb;font-weight:normal;font-family:'Liberation Sans';transform:scaleX(0.82);transform-origin:0 0;">Wiring chart</div>
<div class="a" style="left:24.8px;top:374.72px;width:3px;height:0.8px;background:#4b5560;"></div>
<svg class="a" style="left:18.8px;top:371.72px" width="6" height="6" viewBox="0 0 6 6"><rect x="0.5" y="0.5" width="5" height="5" fill="#e4e7ec" stroke="#9aa2ab" stroke-width="0.6"/><path d="M1.6 3 H4.4" stroke="#203a80" stroke-width="0.8"/><path d="M3 1.6 V4.4" stroke="#203a80" stroke-width="0.8"/></svg>
<svg class="a" style="left:27.8px;top:370.22px" width="9" height="9" viewBox="0 0 9 9"><path d="M3 1.5 H7.5 V7.5 H3 Z M1 4.5 H3" stroke="#c9ced4" fill="none" stroke-width="0.8"/><path d="M5 3 V6" stroke="#c9ced4" stroke-width="0.8"/></svg>
<div class="t" style="left:39.1px;top:371.35px;font-size:7px;line-height:7px;color:#e3e7eb;font-weight:normal;font-family:'Liberation Sans';transform:scaleX(0.82);transform-origin:0 0;">Graphical terminal chart</div>
<div class="a" style="left:24.8px;top:385.4px;width:3px;height:0.8px;background:#4b5560;"></div>
<svg class="a" style="left:18.8px;top:382.4px" width="6" height="6" viewBox="0 0 6 6"><rect x="0.5" y="0.5" width="5" height="5" fill="#e4e7ec" stroke="#9aa2ab" stroke-width="0.6"/><path d="M1.6 3 H4.4" stroke="#203a80" stroke-width="0.8"/><path d="M3 1.6 V4.4" stroke="#203a80" stroke-width="0.8"/></svg>
<svg class="a" style="left:27.8px;top:380.9px" width="9" height="9" viewBox="0 0 9 9"><path d="M0.5 5 H2.5 M1.5 4 V8 M3 1.5 H7 L8 0.5 V7.5 H3 Z M4 3 H7 M4 5 H7" stroke="#c9ced4" fill="none" stroke-width="0.7"/></svg>
<div class="t" style="left:39.1px;top:382.03px;font-size:7px;line-height:7px;color:#e3e7eb;font-weight:normal;font-family:'Liberation Sans';transform:scaleX(0.82);transform-origin:0 0;">Graphical cable chart</div>
<div class="a" style="left:14.5px;top:396.08000000000004px;width:3px;height:0.8px;background:#4b5560;"></div>
<svg class="a" style="left:8.5px;top:393.08000000000004px" width="6" height="6" viewBox="0 0 6 6"><rect x="0.5" y="0.5" width="5" height="5" fill="#e4e7ec" stroke="#9aa2ab" stroke-width="0.6"/><path d="M1.6 3 H4.4" stroke="#203a80" stroke-width="0.8"/><path d="M3 1.6 V4.4" stroke="#203a80" stroke-width="0.8"/></svg>
<svg class="a" style="left:17.5px;top:391.58000000000004px" width="9" height="9" viewBox="0 0 9 9"><path d="M0.5 1 H3.5 L4.5 2 H8.5 V7.5 H0.5 Z" fill="#eef0f2"/></svg>
<div class="t" style="left:28.8px;top:392.71px;font-size:7px;line-height:7px;color:#e3e7eb;font-weight:normal;font-family:'Liberation Sans';transform:scaleX(0.82);transform-origin:0 0;">EI Training</div>
<div class="a" style="left:14.5px;top:406.76px;width:3px;height:0.8px;background:#4b5560;"></div>
<svg class="a" style="left:8.5px;top:403.76px" width="6" height="6" viewBox="0 0 6 6"><rect x="0.5" y="0.5" width="5" height="5" fill="#e4e7ec" stroke="#9aa2ab" stroke-width="0.6"/><path d="M1.6 3 H4.4" stroke="#203a80" stroke-width="0.8"/><path d="M3 1.6 V4.4" stroke="#203a80" stroke-width="0.8"/></svg>
<svg class="a" style="left:17.5px;top:402.26px" width="9" height="9" viewBox="0 0 9 9"><path d="M0.5 1 H3.5 L4.5 2 H8.5 V7.5 H0.5 Z" fill="#eef0f2"/></svg>
<div class="t" style="left:28.8px;top:403.39px;font-size:7px;line-height:7px;color:#e3e7eb;font-weight:normal;font-family:'Liberation Sans';transform:scaleX(0.82);transform-origin:0 0;">P&amp;ID Sample project</div>
<div class="a" style="left:14.5px;top:417.43999999999994px;width:3px;height:0.8px;background:#4b5560;"></div>
<svg class="a" style="left:8.5px;top:414.43999999999994px" width="6" height="6" viewBox="0 0 6 6"><rect x="0.5" y="0.5" width="5" height="5" fill="#e4e7ec" stroke="#9aa2ab" stroke-width="0.6"/><path d="M1.6 3 H4.4" stroke="#203a80" stroke-width="0.8"/><path d="M3 1.6 V4.4" stroke="#203a80" stroke-width="0.8"/></svg>
<svg class="a" style="left:17.5px;top:412.93999999999994px" width="9" height="9" viewBox="0 0 9 9"><path d="M0.5 1 H3.5 L4.5 2 H8.5 V7.5 H0.5 Z" fill="#eef0f2"/></svg>
<div class="t" style="left:28.8px;top:414.07px;font-size:7px;line-height:7px;color:#e3e7eb;font-weight:normal;font-family:'Liberation Sans';transform:scaleX(0.82);transform-origin:0 0;">Projekt Add-On ProjectWizard</div>
<div class="a" style="left:14.5px;top:428.12px;width:3px;height:0.8px;background:#4b5560;"></div>
<svg class="a" style="left:8.5px;top:425.12px" width="6" height="6" viewBox="0 0 6 6"><rect x="0.5" y="0.5" width="5" height="5" fill="#e4e7ec" stroke="#9aa2ab" stroke-width="0.6"/><path d="M1.6 3 H4.4" stroke="#203a80" stroke-width="0.8"/><path d="M3 1.6 V4.4" stroke="#203a80" stroke-width="0.8"/></svg>
<svg class="a" style="left:17.5px;top:423.62px" width="9" height="9" viewBox="0 0 9 9"><path d="M0.5 1 H3.5 L4.5 2 H8.5 V7.5 H0.5 Z" fill="#eef0f2"/></svg>
<div class="t" style="left:28.8px;top:424.75px;font-size:7px;line-height:7px;color:#e3e7eb;font-weight:normal;font-family:'Liberation Sans';transform:scaleX(0.82);transform-origin:0 0;">Projekt BAProject</div>
<div class="a" style="left:14.5px;top:438.79999999999995px;width:3px;height:0.8px;background:#4b5560;"></div>
<svg class="a" style="left:8.5px;top:435.79999999999995px" width="6" height="6" viewBox="0 0 6 6"><rect x="0.5" y="0.5" width="5" height="5" fill="#e4e7ec" stroke="#9aa2ab" stroke-width="0.6"/><path d="M1.6 3 H4.4" stroke="#203a80" stroke-width="0.8"/><path d="M3 1.6 V4.4" stroke="#203a80" stroke-width="0.8"/></svg>
<svg class="a" style="left:17.5px;top:434.29999999999995px" width="9" height="9" viewBox="0 0 9 9"><path d="M0.5 1 H3.5 L4.5 2 H8.5 V7.5 H0.5 Z" fill="#eef0f2"/></svg>
<div class="t" style="left:28.8px;top:435.43px;font-size:7px;line-height:7px;color:#e3e7eb;font-weight:normal;font-family:'Liberation Sans';transform:scaleX(0.82);transform-origin:0 0;">Sample project BA2021</div>
<div class="a" style="left:14.5px;top:449.48px;width:3px;height:0.8px;background:#4b5560;"></div>
<svg class="a" style="left:8.5px;top:446.48px" width="6" height="6" viewBox="0 0 6 6"><rect x="0.5" y="0.5" width="5" height="5" fill="#e4e7ec" stroke="#9aa2ab" stroke-width="0.6"/><path d="M1.6 3 H4.4" stroke="#203a80" stroke-width="0.8"/><path d="M3 1.6 V4.4" stroke="#203a80" stroke-width="0.8"/></svg>
<svg class="a" style="left:17.5px;top:444.98px" width="9" height="9" viewBox="0 0 9 9"><path d="M0.5 1 H3.5 L4.5 2 H8.5 V7.5 H0.5 Z" fill="#eef0f2"/></svg>
<div class="t" style="left:28.8px;top:446.11px;font-size:7px;line-height:7px;color:#e3e7eb;font-weight:normal;font-family:'Liberation Sans';transform:scaleX(0.82);transform-origin:0 0;">Schulung Grundlagen</div>
<div class="a" style="left:14.5px;top:460.15999999999997px;width:3px;height:0.8px;background:#4b5560;"></div>
<svg class="a" style="left:8.5px;top:457.15999999999997px" width="6" height="6" viewBox="0 0 6 6"><rect x="0.5" y="0.5" width="5" height="5" fill="#e4e7ec" stroke="#9aa2ab" stroke-width="0.6"/><path d="M1.6 3 H4.4" stroke="#203a80" stroke-width="0.8"/><path d="M3 1.6 V4.4" stroke="#203a80" stroke-width="0.8"/></svg>
<svg class="a" style="left:17.5px;top:455.65999999999997px" width="9" height="9" viewBox="0 0 9 9"><path d="M0.5 1 H3.5 L4.5 2 H8.5 V7.5 H0.5 Z" fill="#eef0f2"/></svg>
<div class="t" style="left:28.8px;top:456.79px;font-size:7px;line-height:7px;color:#e3e7eb;font-weight:normal;font-family:'Liberation Sans';transform:scaleX(0.82);transform-origin:0 0;">Test</div>
<div class="a" style="left:151px;top:75px;width:4px;height:530px;background:#14202c;"></div>
<div class="a" style="left:152px;top:329.7px;width:2px;height:21.3px;background:#57574f;"></div>
<div class="a" style="left:156px;top:75px;width:685px;height:2px;background:#35414c;"></div>
<div class="a" style="left:156px;top:77px;width:685px;height:20px;background:#2d3844;"></div>
<div class="a" style="left:156px;top:77px;width:116px;height:19.5px;background:#1b2734;"></div>
<svg class="a" style="left:160px;top:81px" width="9" height="11" viewBox="0 0 9 11"><rect x="0" y="0" width="8.5" height="10.5" fill="#c8cc14"/><rect x="1.6" y="1.8" width="2.2" height="7" fill="none" stroke="#45460a" stroke-width="0.7"/><rect x="4.8" y="1.8" width="2.2" height="7" fill="none" stroke="#45460a" stroke-width="0.7"/></svg>
<div class="t" style="left:172.4px;top:82.43px;font-size:7px;line-height:7px;color:#eef0f3;font-weight:normal;font-family:'Liberation Sans';transform:scaleX(0.905);transform-origin:0 0;">=A1+ST_CAB.0001.wsCBD</div>
<svg class="a" style="left:259px;top:81px" width="9" height="9" viewBox="0 0 9 9"><path d="M1.5 1.5 L7 7 M7 1.5 L1.5 7" stroke="#f0f2f4" stroke-width="1.2"/></svg>
<svg class="a" style="left:813px;top:80px" width="28" height="9" viewBox="0 0 28 9"><path d="M2 2 H8.5 L5.25 6.5 Z" fill="#e8ecef"/><path d="M17 1.5 L22.5 7 M22.5 1.5 L17 7" stroke="#f0f2f4" stroke-width="1.2"/></svg>
<div class="a" style="left:155px;top:96.5px;width:686px;height:508.5px;background:#2f3a45;"></div>
<div class="a" style="left:155px;top:96.5px;width:2.5px;height:504.5px;background:#38434f;"></div>
<div class="a" style="left:155px;top:601px;width:686px;height:4px;background:#1e2935;"></div>
<div class="a" style="left:157.5px;top:97px;width:680px;height:10px;background:#1b2633;"></div>
<svg class="a" style="left:0px;top:0px;pointer-events:none" width="1024" height="619" viewBox="0 0 1024 619"><path d="M165.9 101.5 V106" stroke="#8a949e" stroke-width="0.8"/><path d="M248.9 101.5 V106" stroke="#8a949e" stroke-width="0.8"/><path d="M331.9 101.5 V106" stroke="#8a949e" stroke-width="0.8"/><path d="M414.9 101.5 V106" stroke="#8a949e" stroke-width="0.8"/><path d="M497.9 101.5 V106" stroke="#8a949e" stroke-width="0.8"/><path d="M580.9 101.5 V106" stroke="#8a949e" stroke-width="0.8"/><path d="M663.9 101.5 V106" stroke="#8a949e" stroke-width="0.8"/><path d="M746.9 101.5 V106" stroke="#8a949e" stroke-width="0.8"/><path d="M829.9 101.5 V106" stroke="#8a949e" stroke-width="0.8"/><text x="207.4" y="104.8" font-size="6.3" fill="#c9d0d8" text-anchor="middle" font-family="Liberation Sans" font-weight="bold">1</text><text x="290.4" y="104.8" font-size="6.3" fill="#c9d0d8" text-anchor="middle" font-family="Liberation Sans" font-weight="bold">2</text><text x="373.4" y="104.8" font-size="6.3" fill="#c9d0d8" text-anchor="middle" font-family="Liberation Sans" font-weight="bold">3</text><text x="456.4" y="104.8" font-size="6.3" fill="#c9d0d8" text-anchor="middle" font-family="Liberation Sans" font-weight="bold">4</text><text x="539.4" y="104.8" font-size="6.3" fill="#c9d0d8" text-anchor="middle" font-family="Liberation Sans" font-weight="bold">5</text><text x="622.4" y="104.8" font-size="6.3" fill="#c9d0d8" text-anchor="middle" font-family="Liberation Sans" font-weight="bold">6</text><text x="705.4" y="104.8" font-size="6.3" fill="#c9d0d8" text-anchor="middle" font-family="Liberation Sans" font-weight="bold">7</text><text x="788.4" y="104.8" font-size="6.3" fill="#c9d0d8" text-anchor="middle" font-family="Liberation Sans" font-weight="bold">8</text></svg>
<div class="a" style="left:157.5px;top:107px;width:680px;height:494px;background:#ffffff;"></div>
<svg class="a" style="left:0px;top:0px;" width="1024" height="619" viewBox="0 0 1024 619"><rect x="165.4" y="119.6" width="664.0" height="468.79999999999995" fill="none" stroke="#6a6a6a" stroke-width="1"/><line x1="165.4" y1="131.2" x2="829.4" y2="131.2" stroke="#6e6e6e" stroke-width="0.9"/><line x1="248.4" y1="119.6" x2="248.4" y2="131.2" stroke="#555" stroke-width="1"/><line x1="331.4" y1="119.6" x2="331.4" y2="131.2" stroke="#555" stroke-width="1"/><line x1="414.4" y1="119.6" x2="414.4" y2="131.2" stroke="#555" stroke-width="1"/><line x1="497.4" y1="119.6" x2="497.4" y2="131.2" stroke="#555" stroke-width="1"/><line x1="580.4" y1="119.6" x2="580.4" y2="131.2" stroke="#555" stroke-width="1"/><line x1="663.4" y1="119.6" x2="663.4" y2="131.2" stroke="#555" stroke-width="1"/><line x1="746.4" y1="119.6" x2="746.4" y2="131.2" stroke="#555" stroke-width="1"/><text x="206.9" y="127" font-size="4.5" fill="#222" text-anchor="middle" font-family="Liberation Sans" font-weight="normal" letter-spacing="0.3">1</text><text x="289.9" y="127" font-size="4.5" fill="#222" text-anchor="middle" font-family="Liberation Sans" font-weight="normal" letter-spacing="0.3">2</text><text x="372.9" y="127" font-size="4.5" fill="#222" text-anchor="middle" font-family="Liberation Sans" font-weight="normal" letter-spacing="0.3">3</text><text x="455.9" y="127" font-size="4.5" fill="#222" text-anchor="middle" font-family="Liberation Sans" font-weight="normal" letter-spacing="0.3">4</text><text x="538.9" y="127" font-size="4.5" fill="#222" text-anchor="middle" font-family="Liberation Sans" font-weight="normal" letter-spacing="0.3">5</text><text x="621.9" y="127" font-size="4.5" fill="#222" text-anchor="middle" font-family="Liberation Sans" font-weight="normal" letter-spacing="0.3">6</text><text x="704.9" y="127" font-size="4.5" fill="#222" text-anchor="middle" font-family="Liberation Sans" font-weight="normal" letter-spacing="0.3">7</text><text x="787.9" y="127" font-size="4.5" fill="#222" text-anchor="middle" font-family="Liberation Sans" font-weight="normal" letter-spacing="0.3">8</text><line x1="497.4" y1="114" x2="497.4" y2="119.6" stroke="#888" stroke-width="0.8"/><line x1="165.4" y1="553.4" x2="829.4" y2="553.4" stroke="#6a6a6a" stroke-width="1"/><line x1="165.4" y1="562.4" x2="361.2" y2="562.4" stroke="#6e6e6e" stroke-width="0.9"/><line x1="165.4" y1="571.3" x2="361.2" y2="571.3" stroke="#6e6e6e" stroke-width="0.9"/><line x1="165.4" y1="579.7" x2="361.2" y2="579.7" stroke="#6e6e6e" stroke-width="0.9"/><line x1="194.4" y1="553.4" x2="194.4" y2="588.4" stroke="#6e6e6e" stroke-width="0.9"/><line x1="239.3" y1="553.4" x2="239.3" y2="588.4" stroke="#6e6e6e" stroke-width="0.9"/><line x1="262.4" y1="553.4" x2="262.4" y2="588.4" stroke="#6e6e6e" stroke-width="0.9"/><line x1="280.8" y1="553.4" x2="280.8" y2="588.4" stroke="#6e6e6e" stroke-width="0.9"/><line x1="309.7" y1="553.4" x2="309.7" y2="588.4" stroke="#6e6e6e" stroke-width="0.9"/><line x1="361.2" y1="553.4" x2="361.2" y2="588.4" stroke="#6e6e6e" stroke-width="0.9"/><line x1="453.6" y1="553.4" x2="453.6" y2="588.4" stroke="#6e6e6e" stroke-width="0.9"/><line x1="543.4" y1="553.4" x2="543.4" y2="588.4" stroke="#6e6e6e" stroke-width="0.9"/><line x1="628.9" y1="553.4" x2="628.9" y2="588.4" stroke="#6e6e6e" stroke-width="0.9"/><line x1="709.2" y1="562.6" x2="829.4" y2="562.6" stroke="#6e6e6e" stroke-width="0.9"/><line x1="709.2" y1="553.4" x2="709.2" y2="571" stroke="#6e6e6e" stroke-width="0.9"/><line x1="748.8" y1="553.4" x2="748.8" y2="571" stroke="#6e6e6e" stroke-width="0.9"/><line x1="628.9" y1="571" x2="829.4" y2="571" stroke="#6e6e6e" stroke-width="0.9"/><line x1="728.6" y1="571" x2="728.6" y2="588.4" stroke="#6e6e6e" stroke-width="0.9"/><line x1="787.2" y1="571" x2="787.2" y2="588.4" stroke="#6e6e6e" stroke-width="0.9"/><line x1="787.2" y1="579.7" x2="829.4" y2="579.7" stroke="#6e6e6e" stroke-width="0.9"/><text x="283" y="559.8" font-size="5" fill="#222" text-anchor="start" font-family="Liberation Mono" font-weight="normal" letter-spacing="0.3">Date</text><text x="283" y="568.7" font-size="5" fill="#222" text-anchor="start" font-family="Liberation Mono" font-weight="normal" letter-spacing="0.3">Drn By</text><text x="283" y="577" font-size="5" fill="#222" text-anchor="start" font-family="Liberation Mono" font-weight="normal" letter-spacing="0.3">Check</text><text x="283" y="586" font-size="5" fill="#222" text-anchor="start" font-family="Liberation Mono" font-weight="normal" letter-spacing="0.3">Norm</text><text x="312" y="559.8" font-size="5" fill="#222" text-anchor="start" font-family="Liberation Mono" font-weight="normal" letter-spacing="0.3">12.11.20</text><text x="312" y="568.7" font-size="5" fill="#222" text-anchor="start" font-family="Liberation Mono" font-weight="normal" letter-spacing="0.3">Hower</text><text x="312" y="586" font-size="5" fill="#222" text-anchor="start" font-family="Liberation Mono" font-weight="normal" letter-spacing="0.3">DIN 81346</text><text x="362.5" y="559.8" font-size="5" fill="#222" text-anchor="start" font-family="Liberation Mono" font-weight="normal" letter-spacing="0.3">DEMO Project 1</text><text x="545" y="559.8" font-size="5" fill="#222" text-anchor="start" font-family="Liberation Mono" font-weight="normal" letter-spacing="0.3">Cabinet design</text><text x="631" y="559.8" font-size="5" fill="#222" text-anchor="start" font-family="Liberation Mono" font-weight="normal" letter-spacing="0.3">Project number</text><text x="711" y="559.3" font-size="5" fill="#222" text-anchor="start" font-family="Liberation Mono" font-weight="normal" letter-spacing="0.3">Unit</text><text x="711" y="568.2" font-size="5" fill="#222" text-anchor="start" font-family="Liberation Mono" font-weight="normal" letter-spacing="0.3">Field</text><text x="751" y="559.8" font-size="5" fill="#222" text-anchor="start" font-family="Liberation Mono" font-weight="normal" letter-spacing="0.3">=A1</text><text x="751" y="568.7" font-size="5" fill="#222" text-anchor="start" font-family="Liberation Mono" font-weight="normal" letter-spacing="0.3">+ST</text><text x="631" y="577.5" font-size="5" fill="#222" text-anchor="start" font-family="Liberation Mono" font-weight="normal" letter-spacing="0.3">Drawing number</text><text x="631" y="585.3" font-size="5" fill="#222" text-anchor="start" font-family="Liberation Mono" font-weight="normal" letter-spacing="0.3">12/2020</text><text x="731" y="581.5" font-size="5" fill="#222" text-anchor="start" font-family="Liberation Mono" font-weight="normal" letter-spacing="0.3">&amp;ELU</text><text x="789" y="577.3" font-size="5" fill="#222" text-anchor="start" font-family="Liberation Mono" font-weight="normal" letter-spacing="0.3">sheet</text><text x="789" y="586" font-size="5" fill="#222" text-anchor="start" font-family="Liberation Mono" font-weight="normal" letter-spacing="0.3">of</text><text x="173" y="547.5" font-size="5" fill="#222" text-anchor="start" font-family="Liberation Mono" font-weight="normal" letter-spacing="0.3">of</text><text x="772" y="547.5" font-size="5" fill="#222" text-anchor="start" font-family="Liberation Mono" font-weight="normal" letter-spacing="0.3">to</text><text x="787" y="547.5" font-size="5" fill="#222" text-anchor="start" font-family="Liberation Mono" font-weight="normal" letter-spacing="0.3">=A1+P1/1</text><text x="827.5" y="577.3" font-size="5" fill="#222" text-anchor="end" font-family="Liberation Mono" font-weight="normal" letter-spacing="0.3">1</text><text x="827.5" y="586" font-size="5" fill="#222" text-anchor="end" font-family="Liberation Mono" font-weight="normal" letter-spacing="0.3">162</text><text x="179.9" y="586" font-size="5" fill="#222" text-anchor="middle" font-family="Liberation Mono" font-weight="normal" letter-spacing="0.3">Status</text><text x="216.8" y="586" font-size="5" fill="#222" text-anchor="middle" font-family="Liberation Mono" font-weight="normal" letter-spacing="0.3">rev.</text><text x="250.8" y="586" font-size="5" fill="#222" text-anchor="middle" font-family="Liberation Mono" font-weight="normal" letter-spacing="0.3">Date</text><text x="271.6" y="586" font-size="5" fill="#222" text-anchor="middle" font-family="Liberation Mono" font-weight="normal" letter-spacing="0.3">Name</text><defs><linearGradient id="lg1" x1="0" x2="1" y1="0" y2="0"><stop offset="0" stop-color="#9a9a9a"/><stop offset="0.5" stop-color="#1a1a1a"/><stop offset="1" stop-color="#4a4a4a"/></linearGradient><linearGradient id="lg2" x1="0" x2="1"><stop offset="0" stop-color="#222"/><stop offset="0.6" stop-color="#aaa"/><stop offset="1" stop-color="#111"/></linearGradient></defs><text x="455.5" y="565" font-size="7.6" fill="#6e6e6e" font-family="Liberation Sans" font-weight="bold" letter-spacing="-0.3">WS</text><path d="M498 559.8 H481.5 Q473.5 559.8 473.5 566.5 V569.5 Q473.5 576.3 481.5 576.3 H497 V571.8 H483 Q478.6 571.8 478.6 568.5 V567.5 Q478.6 564.3 483 564.3 H498 Z" fill="url(#lg1)"/><path d="M457 565.5 L478 566 H536 V570 H478 L467 570.5 Z" fill="#f4c82a"/><path d="M494.5 576.3 L504 559.8 H511 L519.5 576.3 H514 L507.5 564.5 L500.5 576.3 Z" fill="#161616"/><path d="M512 559.8 H532.5 Q540.5 559.8 540.5 567 V569 Q540.5 576.3 532.5 576.3 H512 V571.8 H531.5 Q535.6 571.8 535.6 568.5 V567.5 Q535.6 564.3 531.5 564.3 H512 Z" fill="url(#lg2)"/><text x="507.5" y="583.5" font-size="4.8" fill="#9a9a9a" font-family="Liberation Sans" text-anchor="middle" letter-spacing="0.1">ELECTRICAL ENGINEERING</text></svg>
<svg class="a" style="left:0px;top:0px;" width="1024" height="619" viewBox="0 0 1024 619"><rect x="351" y="148.5" width="116.5" height="352.5" fill="#e3e3e3" stroke="#8c8c8c" stroke-width="1.2" /><line x1="351.5" y1="150" x2="446" y2="150" stroke="#2a2a2a" stroke-width="1"/><rect x="355" y="150.5" width="74" height="9" fill="#ffffff" stroke="#999" stroke-width="0.6" /><rect x="429" y="150.5" width="17" height="14" fill="#ffffff" stroke="#444" stroke-width="0.7" /><circle cx="434" cy="152.5" r="1.3" fill="#fff" stroke="#222" stroke-width="0.6"/><rect x="433" y="157.5" width="5" height="3" fill="#222" stroke="none" stroke-width="0.8" /><rect x="439" y="157.5" width="4" height="3" fill="#222" stroke="none" stroke-width="0.8" /><rect x="363.5" y="165" width="88.5" height="318" fill="#8edc8e" stroke="none" stroke-width="0.8" /><rect x="363.5" y="217.5" width="78" height="24.5" fill="#c9c9c9" stroke="none" stroke-width="0.8" /><line x1="363.5" y1="242.0" x2="441.5" y2="242.0" stroke="#3a3a3a" stroke-width="0.8"/><line x1="363.5" y1="217.5" x2="363.5" y2="242.0" stroke="#6a6a6a" stroke-width="0.6"/><line x1="363.5" y1="217.5" x2="441.5" y2="217.5" stroke="#7a7a7a" stroke-width="0.5"/><rect x="371" y="249" width="71" height="22" fill="#c9c9c9" stroke="none" stroke-width="0.8" /><line x1="371" y1="271" x2="442" y2="271" stroke="#3a3a3a" stroke-width="0.8"/><line x1="371" y1="249" x2="371" y2="271" stroke="#6a6a6a" stroke-width="0.6"/><line x1="371" y1="249" x2="442" y2="249" stroke="#7a7a7a" stroke-width="0.5"/><rect x="370.5" y="278.3" width="71" height="26" fill="#c9c9c9" stroke="none" stroke-width="0.8" /><line x1="370.5" y1="304.3" x2="441.5" y2="304.3" stroke="#3a3a3a" stroke-width="0.8"/><line x1="370.5" y1="278.3" x2="370.5" y2="304.3" stroke="#6a6a6a" stroke-width="0.6"/><line x1="370.5" y1="278.3" x2="441.5" y2="278.3" stroke="#7a7a7a" stroke-width="0.5"/><rect x="370.5" y="311.3" width="71" height="80.7" fill="#c9c9c9" stroke="none" stroke-width="0.8" /><line x1="370.5" y1="392.0" x2="441.5" y2="392.0" stroke="#3a3a3a" stroke-width="0.8"/><line x1="370.5" y1="311.3" x2="370.5" y2="392.0" stroke="#6a6a6a" stroke-width="0.6"/><line x1="370.5" y1="311.3" x2="441.5" y2="311.3" stroke="#7a7a7a" stroke-width="0.5"/><rect x="363.5" y="402.3" width="77.5" height="35.7" fill="#c9c9c9" stroke="none" stroke-width="0.8" /><line x1="363.5" y1="438.0" x2="441.0" y2="438.0" stroke="#3a3a3a" stroke-width="0.8"/><line x1="363.5" y1="402.3" x2="363.5" y2="438.0" stroke="#6a6a6a" stroke-width="0.6"/><line x1="363.5" y1="402.3" x2="441.0" y2="402.3" stroke="#7a7a7a" stroke-width="0.5"/><rect x="363.7" y="445.6" width="77.3" height="19.4" fill="#c9c9c9" stroke="none" stroke-width="0.8" /><line x1="363.7" y1="465.0" x2="441.0" y2="465.0" stroke="#3a3a3a" stroke-width="0.8"/><line x1="363.7" y1="445.6" x2="363.7" y2="465.0" stroke="#6a6a6a" stroke-width="0.6"/><line x1="363.7" y1="445.6" x2="441.0" y2="445.6" stroke="#7a7a7a" stroke-width="0.5"/><line x1="367.5" y1="170" x2="367.5" y2="475" stroke="#cc3a6a" stroke-width="0.8"/><line x1="446.5" y1="170" x2="446.5" y2="475" stroke="#cc3a6a" stroke-width="0.8"/><line x1="375.5" y1="272" x2="375.5" y2="316" stroke="#cc3a6a" stroke-width="0.8"/><line x1="380.5" y1="272" x2="380.5" y2="316" stroke="#cc3a6a" stroke-width="0.8"/><line x1="385.5" y1="272" x2="385.5" y2="316" stroke="#cc3a6a" stroke-width="0.8"/><line x1="389.5" y1="272" x2="389.5" y2="316" stroke="#cc3a6a" stroke-width="0.8"/><line x1="391.5" y1="272" x2="391.5" y2="316" stroke="#cc3a6a" stroke-width="0.8"/><line x1="395.5" y1="272" x2="395.5" y2="316" stroke="#cc3a6a" stroke-width="0.8"/><line x1="401.5" y1="272" x2="401.5" y2="316" stroke="#cc3a6a" stroke-width="0.8"/><line x1="405.5" y1="272" x2="405.5" y2="316" stroke="#cc3a6a" stroke-width="0.8"/><line x1="408.5" y1="272" x2="408.5" y2="316" stroke="#cc3a6a" stroke-width="0.8"/><line x1="410.5" y1="272" x2="410.5" y2="316" stroke="#cc3a6a" stroke-width="0.8"/><line x1="415.5" y1="272" x2="415.5" y2="316" stroke="#cc3a6a" stroke-width="0.8"/><line x1="421.5" y1="272" x2="421.5" y2="316" stroke="#cc3a6a" stroke-width="0.8"/><line x1="426.5" y1="272" x2="426.5" y2="316" stroke="#cc3a6a" stroke-width="0.8"/><line x1="428.5" y1="272" x2="428.5" y2="316" stroke="#cc3a6a" stroke-width="0.8"/><line x1="432.5" y1="272" x2="432.5" y2="316" stroke="#cc3a6a" stroke-width="0.8"/><line x1="436.5" y1="272" x2="436.5" y2="316" stroke="#cc3a6a" stroke-width="0.8"/><line x1="440.5" y1="272" x2="440.5" y2="316" stroke="#cc3a6a" stroke-width="0.8"/><line x1="372.5" y1="385" x2="372.5" y2="440" stroke="#cc3a6a" stroke-width="0.8"/><line x1="375.5" y1="385" x2="375.5" y2="440" stroke="#cc3a6a" stroke-width="0.8"/><line x1="377.5" y1="385" x2="377.5" y2="440" stroke="#cc3a6a" stroke-width="0.8"/><line x1="380.5" y1="385" x2="380.5" y2="440" stroke="#cc3a6a" stroke-width="0.8"/><line x1="384.5" y1="385" x2="384.5" y2="440" stroke="#cc3a6a" stroke-width="0.8"/><line x1="387.5" y1="385" x2="387.5" y2="440" stroke="#cc3a6a" stroke-width="0.8"/><line x1="371.5" y1="395" x2="371.5" y2="475" stroke="#cc3a6a" stroke-width="0.8"/><line x1="374.5" y1="395" x2="374.5" y2="475" stroke="#cc3a6a" stroke-width="0.8"/><line x1="377.5" y1="395" x2="377.5" y2="475" stroke="#cc3a6a" stroke-width="0.8"/><line x1="380.5" y1="395" x2="380.5" y2="475" stroke="#cc3a6a" stroke-width="0.8"/><line x1="384.5" y1="395" x2="384.5" y2="475" stroke="#cc3a6a" stroke-width="0.8"/><line x1="387.5" y1="395" x2="387.5" y2="475" stroke="#cc3a6a" stroke-width="0.8"/><line x1="375.5" y1="168" x2="375.5" y2="276" stroke="#cc3a6a" stroke-width="0.8"/><line x1="378.5" y1="168" x2="378.5" y2="276" stroke="#cc3a6a" stroke-width="0.8"/><line x1="390.5" y1="168" x2="390.5" y2="276" stroke="#cc3a6a" stroke-width="0.8"/><line x1="396.5" y1="168" x2="396.5" y2="276" stroke="#cc3a6a" stroke-width="0.8"/><line x1="399.5" y1="168" x2="399.5" y2="276" stroke="#cc3a6a" stroke-width="0.8"/><line x1="401.5" y1="168" x2="401.5" y2="276" stroke="#cc3a6a" stroke-width="0.8"/><line x1="383.5" y1="168" x2="383.5" y2="256" stroke="#cc3a6a" stroke-width="0.8"/><line x1="393.5" y1="168" x2="393.5" y2="262" stroke="#cc3a6a" stroke-width="0.8"/><line x1="433.5" y1="300" x2="433.5" y2="350" stroke="#c02858" stroke-width="0.9"/><line x1="367.5" y1="208.5" x2="446.5" y2="208.5" stroke="#cc3a6a" stroke-width="0.6"/><line x1="367.5" y1="244.5" x2="446.5" y2="244.5" stroke="#cc3a6a" stroke-width="0.6"/><line x1="367.5" y1="275" x2="446.5" y2="275" stroke="#cc3a6a" stroke-width="0.6"/><line x1="367.5" y1="308.2" x2="446.5" y2="308.2" stroke="#cc3a6a" stroke-width="0.6"/><line x1="367.5" y1="396.5" x2="446.5" y2="396.5" stroke="#cc3a6a" stroke-width="0.6"/><line x1="367.5" y1="441.5" x2="446.5" y2="441.5" stroke="#cc3a6a" stroke-width="0.6"/><path d="M380 474.5 H446.5 V441.5 L450 438.5" stroke="#cc3a6a" stroke-width="0.6" fill="none"/><rect x="377" y="207" width="8" height="22" fill="#e7a8bd" stroke="none" stroke-width="0.8" opacity="0.6"/><line x1="377.4" y1="207" x2="377.4" y2="229" stroke="#c8285a" stroke-width="0.55"/><line x1="378.84" y1="207" x2="378.84" y2="229" stroke="#c8285a" stroke-width="0.55"/><line x1="380.28" y1="207" x2="380.28" y2="229" stroke="#c8285a" stroke-width="0.55"/><line x1="381.71999999999997" y1="207" x2="381.71999999999997" y2="229" stroke="#c8285a" stroke-width="0.55"/><line x1="383.15999999999997" y1="207" x2="383.15999999999997" y2="229" stroke="#c8285a" stroke-width="0.55"/><line x1="384.59999999999997" y1="207" x2="384.59999999999997" y2="229" stroke="#c8285a" stroke-width="0.55"/><rect x="388" y="222" width="4" height="40" fill="#e7a8bd" stroke="none" stroke-width="0.8" opacity="0.6"/><line x1="388.4" y1="222" x2="388.4" y2="262" stroke="#c8285a" stroke-width="0.55"/><line x1="390.0" y1="222" x2="390.0" y2="262" stroke="#c8285a" stroke-width="0.55"/><line x1="391.59999999999997" y1="222" x2="391.59999999999997" y2="262" stroke="#c8285a" stroke-width="0.55"/><rect x="395" y="218" width="4" height="40" fill="#e7a8bd" stroke="none" stroke-width="0.8" opacity="0.6"/><line x1="395.4" y1="218" x2="395.4" y2="258" stroke="#c8285a" stroke-width="0.55"/><line x1="397.0" y1="218" x2="397.0" y2="258" stroke="#c8285a" stroke-width="0.55"/><line x1="398.59999999999997" y1="218" x2="398.59999999999997" y2="258" stroke="#c8285a" stroke-width="0.55"/><rect x="399" y="395" width="10" height="23" fill="#e7a8bd" stroke="none" stroke-width="0.8" opacity="0.6"/><line x1="399.4" y1="395" x2="399.4" y2="418" stroke="#c8285a" stroke-width="0.55"/><line x1="400.93333333333334" y1="395" x2="400.93333333333334" y2="418" stroke="#c8285a" stroke-width="0.55"/><line x1="402.46666666666664" y1="395" x2="402.46666666666664" y2="418" stroke="#c8285a" stroke-width="0.55"/><line x1="404.0" y1="395" x2="404.0" y2="418" stroke="#c8285a" stroke-width="0.55"/><line x1="405.5333333333333" y1="395" x2="405.5333333333333" y2="418" stroke="#c8285a" stroke-width="0.55"/><line x1="407.06666666666666" y1="395" x2="407.06666666666666" y2="418" stroke="#c8285a" stroke-width="0.55"/><line x1="408.59999999999997" y1="395" x2="408.59999999999997" y2="418" stroke="#c8285a" stroke-width="0.55"/><rect x="412.5" y="395" width="1.8" height="78" fill="#e7a8bd" stroke="none" stroke-width="0.8" opacity="0.6"/><line x1="412.9" y1="395" x2="412.9" y2="473" stroke="#c8285a" stroke-width="0.55"/><line x1="413.9" y1="395" x2="413.9" y2="473" stroke="#c8285a" stroke-width="0.55"/><rect x="416" y="395" width="4" height="40" fill="#e7a8bd" stroke="none" stroke-width="0.8" opacity="0.6"/><line x1="416.4" y1="395" x2="416.4" y2="435" stroke="#c8285a" stroke-width="0.55"/><line x1="418.0" y1="395" x2="418.0" y2="435" stroke="#c8285a" stroke-width="0.55"/><line x1="419.59999999999997" y1="395" x2="419.59999999999997" y2="435" stroke="#c8285a" stroke-width="0.55"/><rect x="425" y="395" width="7" height="36" fill="#e7a8bd" stroke="none" stroke-width="0.8" opacity="0.6"/><line x1="425.4" y1="395" x2="425.4" y2="431" stroke="#c8285a" stroke-width="0.55"/><line x1="426.95" y1="395" x2="426.95" y2="431" stroke="#c8285a" stroke-width="0.55"/><line x1="428.5" y1="395" x2="428.5" y2="431" stroke="#c8285a" stroke-width="0.55"/><line x1="430.04999999999995" y1="395" x2="430.04999999999995" y2="431" stroke="#c8285a" stroke-width="0.55"/><line x1="431.59999999999997" y1="395" x2="431.59999999999997" y2="431" stroke="#c8285a" stroke-width="0.55"/><rect x="435" y="395" width="4" height="30" fill="#e7a8bd" stroke="none" stroke-width="0.8" opacity="0.6"/><line x1="435.4" y1="395" x2="435.4" y2="425" stroke="#c8285a" stroke-width="0.55"/><line x1="437.0" y1="395" x2="437.0" y2="425" stroke="#c8285a" stroke-width="0.55"/><line x1="438.59999999999997" y1="395" x2="438.59999999999997" y2="425" stroke="#c8285a" stroke-width="0.55"/><rect x="404" y="442" width="37" height="10" fill="#e7a8bd" stroke="none" stroke-width="0.8" opacity="0.6"/><line x1="404.4" y1="442" x2="404.4" y2="452" stroke="#c8285a" stroke-width="0.55"/><line x1="405.7407407407407" y1="442" x2="405.7407407407407" y2="452" stroke="#c8285a" stroke-width="0.55"/><line x1="407.08148148148143" y1="442" x2="407.08148148148143" y2="452" stroke="#c8285a" stroke-width="0.55"/><line x1="408.4222222222222" y1="442" x2="408.4222222222222" y2="452" stroke="#c8285a" stroke-width="0.55"/><line x1="409.76296296296294" y1="442" x2="409.76296296296294" y2="452" stroke="#c8285a" stroke-width="0.55"/><line x1="411.1037037037037" y1="442" x2="411.1037037037037" y2="452" stroke="#c8285a" stroke-width="0.55"/><line x1="412.4444444444444" y1="442" x2="412.4444444444444" y2="452" stroke="#c8285a" stroke-width="0.55"/><line x1="413.7851851851852" y1="442" x2="413.7851851851852" y2="452" stroke="#c8285a" stroke-width="0.55"/><line x1="415.1259259259259" y1="442" x2="415.1259259259259" y2="452" stroke="#c8285a" stroke-width="0.55"/><line x1="416.46666666666664" y1="442" x2="416.46666666666664" y2="452" stroke="#c8285a" stroke-width="0.55"/><line x1="417.80740740740737" y1="442" x2="417.80740740740737" y2="452" stroke="#c8285a" stroke-width="0.55"/><line x1="419.14814814814815" y1="442" x2="419.14814814814815" y2="452" stroke="#c8285a" stroke-width="0.55"/><line x1="420.4888888888889" y1="442" x2="420.4888888888889" y2="452" stroke="#c8285a" stroke-width="0.55"/><line x1="421.8296296296296" y1="442" x2="421.8296296296296" y2="452" stroke="#c8285a" stroke-width="0.55"/><line x1="423.17037037037034" y1="442" x2="423.17037037037034" y2="452" stroke="#c8285a" stroke-width="0.55"/><line x1="424.51111111111106" y1="442" x2="424.51111111111106" y2="452" stroke="#c8285a" stroke-width="0.55"/><line x1="425.85185185185185" y1="442" x2="425.85185185185185" y2="452" stroke="#c8285a" stroke-width="0.55"/><line x1="427.1925925925926" y1="442" x2="427.1925925925926" y2="452" stroke="#c8285a" stroke-width="0.55"/><line x1="428.5333333333333" y1="442" x2="428.5333333333333" y2="452" stroke="#c8285a" stroke-width="0.55"/><line x1="429.87407407407403" y1="442" x2="429.87407407407403" y2="452" stroke="#c8285a" stroke-width="0.55"/><line x1="431.2148148148148" y1="442" x2="431.2148148148148" y2="452" stroke="#c8285a" stroke-width="0.55"/><line x1="432.55555555555554" y1="442" x2="432.55555555555554" y2="452" stroke="#c8285a" stroke-width="0.55"/><line x1="433.89629629629627" y1="442" x2="433.89629629629627" y2="452" stroke="#c8285a" stroke-width="0.55"/><line x1="435.237037037037" y1="442" x2="435.237037037037" y2="452" stroke="#c8285a" stroke-width="0.55"/><line x1="436.5777777777778" y1="442" x2="436.5777777777778" y2="452" stroke="#c8285a" stroke-width="0.55"/><line x1="437.9185185185185" y1="442" x2="437.9185185185185" y2="452" stroke="#c8285a" stroke-width="0.55"/><line x1="439.25925925925924" y1="442" x2="439.25925925925924" y2="452" stroke="#c8285a" stroke-width="0.55"/><line x1="440.59999999999997" y1="442" x2="440.59999999999997" y2="452" stroke="#c8285a" stroke-width="0.55"/><rect x="411" y="438" width="4" height="36" fill="#e7a8bd" stroke="none" stroke-width="0.8" opacity="0.6"/><line x1="411.4" y1="438" x2="411.4" y2="474" stroke="#c8285a" stroke-width="0.55"/><line x1="413.0" y1="438" x2="413.0" y2="474" stroke="#c8285a" stroke-width="0.55"/><line x1="414.59999999999997" y1="438" x2="414.59999999999997" y2="474" stroke="#c8285a" stroke-width="0.55"/><rect x="363.5" y="227.9" width="37" height="5.2" fill="#e6dc12" stroke="#5a5a10" stroke-width="0.4" /><rect x="371" y="257.4" width="30" height="5.2" fill="#e6dc12" stroke="#5a5a10" stroke-width="0.4" /><rect x="371" y="285.9" width="70" height="5.2" fill="#e6dc12" stroke="#5a5a10" stroke-width="0.4" /><rect x="397" y="417.4" width="44" height="5.2" fill="#e6dc12" stroke="#5a5a10" stroke-width="0.4" /><rect x="365" y="224" width="8" height="12" fill="#fff" stroke="#222" stroke-width="0.7" /><path d="M366.5 226 L371.5 234 M371.5 226 L366.5 234" stroke="#333" stroke-width="0.5" fill="none"/><rect x="377" y="228" width="8" height="5" fill="#111" stroke="none" stroke-width="0.8" /><rect x="390" y="223" width="4" height="13" fill="#fff" stroke="#c02858" stroke-width="0.6" /><rect x="397" y="223" width="4" height="13" fill="#fff" stroke="#333" stroke-width="0.5" /><rect x="375" y="256" width="7" height="8" fill="#111" stroke="none" stroke-width="0.8" /><rect x="383" y="251" width="9" height="17" fill="#fff" stroke="#222" stroke-width="0.7" /><rect x="385" y="253" width="2" height="3" fill="#222" stroke="none" stroke-width="0.8" /><rect x="388" y="258" width="2" height="3" fill="#222" stroke="none" stroke-width="0.8" /><rect x="372.5" y="283" width="4.6" height="14" fill="#fafafa" stroke="none" stroke-width="0.8" /><path d="M373.0 284 L374.8 287.5 L376.6 284 M373.0 296 L374.8 292.5 L376.6 296" stroke="#111" stroke-width="0.8" fill="none"/><rect x="373.8" y="288" width="2" height="1.5" fill="#333" stroke="none" stroke-width="0.8" /><rect x="378.1" y="283" width="4.6" height="14" fill="#fafafa" stroke="none" stroke-width="0.8" /><path d="M378.6 284 L380.40000000000003 287.5 L382.20000000000005 284 M378.6 296 L380.40000000000003 292.5 L382.20000000000005 296" stroke="#111" stroke-width="0.8" fill="none"/><rect x="379.40000000000003" y="288" width="2" height="1.5" fill="#333" stroke="none" stroke-width="0.8" /><rect x="383.7" y="283" width="4.6" height="14" fill="#fafafa" stroke="none" stroke-width="0.8" /><path d="M384.2 284 L386.0 287.5 L387.8 284 M384.2 296 L386.0 292.5 L387.8 296" stroke="#111" stroke-width="0.8" fill="none"/><rect x="385.0" y="288" width="2" height="1.5" fill="#333" stroke="none" stroke-width="0.8" /><rect x="389.3" y="283" width="4.6" height="14" fill="#fafafa" stroke="none" stroke-width="0.8" /><path d="M389.8 284 L391.6 287.5 L393.40000000000003 284 M389.8 296 L391.6 292.5 L393.40000000000003 296" stroke="#111" stroke-width="0.8" fill="none"/><rect x="390.6" y="288" width="2" height="1.5" fill="#333" stroke="none" stroke-width="0.8" /><rect x="394.9" y="283" width="4.6" height="14" fill="#fafafa" stroke="none" stroke-width="0.8" /><path d="M395.4 284 L397.2 287.5 L399.0 284 M395.4 296 L397.2 292.5 L399.0 296" stroke="#111" stroke-width="0.8" fill="none"/><rect x="396.2" y="288" width="2" height="1.5" fill="#333" stroke="none" stroke-width="0.8" /><rect x="400.5" y="283" width="4.6" height="14" fill="#fafafa" stroke="none" stroke-width="0.8" /><path d="M401.0 284 L402.8 287.5 L404.6 284 M401.0 296 L402.8 292.5 L404.6 296" stroke="#111" stroke-width="0.8" fill="none"/><rect x="401.8" y="288" width="2" height="1.5" fill="#333" stroke="none" stroke-width="0.8" /><rect x="406.1" y="283" width="4.6" height="14" fill="#fafafa" stroke="none" stroke-width="0.8" /><path d="M406.6 284 L408.40000000000003 287.5 L410.20000000000005 284 M406.6 296 L408.40000000000003 292.5 L410.20000000000005 296" stroke="#111" stroke-width="0.8" fill="none"/><rect x="407.40000000000003" y="288" width="2" height="1.5" fill="#333" stroke="none" stroke-width="0.8" /><rect x="411.7" y="283" width="4.6" height="14" fill="#fafafa" stroke="none" stroke-width="0.8" /><path d="M412.2 284 L414.0 287.5 L415.8 284 M412.2 296 L414.0 292.5 L415.8 296" stroke="#111" stroke-width="0.8" fill="none"/><rect x="413.0" y="288" width="2" height="1.5" fill="#333" stroke="none" stroke-width="0.8" /><rect x="417.3" y="283" width="4.6" height="14" fill="#fafafa" stroke="none" stroke-width="0.8" /><path d="M417.8 284 L419.6 287.5 L421.40000000000003 284 M417.8 296 L419.6 292.5 L421.40000000000003 296" stroke="#111" stroke-width="0.8" fill="none"/><rect x="418.6" y="288" width="2" height="1.5" fill="#333" stroke="none" stroke-width="0.8" /><rect x="422.9" y="283" width="4.6" height="14" fill="#fafafa" stroke="none" stroke-width="0.8" /><path d="M423.4 284 L425.2 287.5 L427.0 284 M423.4 296 L425.2 292.5 L427.0 296" stroke="#111" stroke-width="0.8" fill="none"/><rect x="424.2" y="288" width="2" height="1.5" fill="#333" stroke="none" stroke-width="0.8" /><rect x="398" y="281.5" width="4" height="17" fill="#fff" stroke="#222" stroke-width="0.5" /><rect x="404" y="281.5" width="4" height="17" fill="#fff" stroke="#222" stroke-width="0.5" /><rect x="410" y="281.5" width="4" height="17" fill="#fff" stroke="#222" stroke-width="0.5" /><rect x="429" y="279.5" width="8" height="19" fill="#fff" stroke="#333" stroke-width="0.6" /><rect x="430.5" y="282" width="5" height="3" fill="#333" stroke="none" stroke-width="0.8" /><rect x="430.5" y="288" width="5" height="3" fill="#333" stroke="none" stroke-width="0.8" /><rect x="430.5" y="293" width="5" height="3" fill="#333" stroke="none" stroke-width="0.8" /><rect x="372.7" y="315.5" width="8.3" height="71.5" fill="#ffffff" stroke="#222" stroke-width="0.6" /><rect x="381" y="315.5" width="17.3" height="71.5" fill="#cacaca" stroke="#222" stroke-width="0.6" /><rect x="381" y="315.5" width="17.3" height="8.5" fill="#111" stroke="none" stroke-width="0.8" /><rect x="381.5" y="374" width="8" height="11" fill="#fff" stroke="#222" stroke-width="0.5" /><rect x="398.3" y="315.5" width="18.2" height="71.5" fill="#ffffff" stroke="#222" stroke-width="0.6" /><rect x="398.3" y="315.5" width="18.2" height="8.5" fill="#111" stroke="none" stroke-width="0.8" /><rect x="416.5" y="315.5" width="9.1" height="71.5" fill="#cacaca" stroke="#222" stroke-width="0.6" /><rect x="416.5" y="315.5" width="9.1" height="8.5" fill="#111" stroke="none" stroke-width="0.8" /><rect x="416.5" y="374" width="9.1" height="11" fill="#fff" stroke="#222" stroke-width="0.5" /><rect x="425.6" y="328" width="8.8" height="53" fill="#ffffff" stroke="#222" stroke-width="0.6" /><rect x="426.5" y="330" width="3" height="22" fill="#111" stroke="none" stroke-width="0.8" /><rect x="431" y="336" width="2.5" height="14" fill="#111" stroke="none" stroke-width="0.8" /><rect x="427" y="358" width="6" height="8" fill="#555" stroke="none" stroke-width="0.8" /><rect x="428" y="368" width="4" height="10" fill="#333" stroke="none" stroke-width="0.8" /><ellipse cx="386" cy="335" rx="2.3" ry="1" fill="none" stroke="#444" stroke-width="0.4"/><ellipse cx="386" cy="338" rx="2.3" ry="1" fill="none" stroke="#444" stroke-width="0.4"/><ellipse cx="386" cy="342" rx="2.3" ry="1" fill="none" stroke="#444" stroke-width="0.4"/><line x1="382.5" y1="331" x2="389.5" y2="331" stroke="#444" stroke-width="0.8"/><ellipse cx="404" cy="335" rx="2.3" ry="1" fill="none" stroke="#444" stroke-width="0.4"/><ellipse cx="404" cy="338" rx="2.3" ry="1" fill="none" stroke="#444" stroke-width="0.4"/><ellipse cx="404" cy="342" rx="2.3" ry="1" fill="none" stroke="#444" stroke-width="0.4"/><line x1="400.5" y1="331" x2="407.5" y2="331" stroke="#444" stroke-width="0.8"/><ellipse cx="421" cy="335" rx="2.3" ry="1" fill="none" stroke="#444" stroke-width="0.4"/><ellipse cx="421" cy="338" rx="2.3" ry="1" fill="none" stroke="#444" stroke-width="0.4"/><ellipse cx="421" cy="342" rx="2.3" ry="1" fill="none" stroke="#444" stroke-width="0.4"/><line x1="417.5" y1="331" x2="424.5" y2="331" stroke="#444" stroke-width="0.8"/><line x1="372.7" y1="386.5" x2="434" y2="386.5" stroke="#111" stroke-width="1.2"/><line x1="385.5" y1="316" x2="385.5" y2="362" stroke="#c02858" stroke-width="0.6"/><line x1="387.5" y1="316" x2="387.5" y2="352" stroke="#c02858" stroke-width="0.6"/><line x1="403.5" y1="316" x2="403.5" y2="340" stroke="#c02858" stroke-width="0.6"/><line x1="405.5" y1="316" x2="405.5" y2="346" stroke="#c02858" stroke-width="0.6"/><line x1="421.5" y1="316" x2="421.5" y2="338" stroke="#c02858" stroke-width="0.6"/><line x1="433.5" y1="298" x2="433.5" y2="352" stroke="#c02858" stroke-width="0.6"/><rect x="393" y="387" width="6" height="2" fill="#c02020" stroke="none" stroke-width="0.8" /><rect x="370.5" y="416.5" width="5.2" height="7.5" fill="#ffffff" stroke="#111" stroke-width="0.8" /><rect x="376.7" y="416.5" width="5.2" height="7.5" fill="#ffffff" stroke="#111" stroke-width="0.8" /><rect x="382.9" y="416.5" width="5.2" height="7.5" fill="#ffffff" stroke="#111" stroke-width="0.8" /><rect x="399" y="417" width="10" height="6" fill="#111" stroke="none" stroke-width="0.8" /><rect x="412" y="415" width="1.5" height="11" fill="#111" stroke="none" stroke-width="0.8" /><rect x="417" y="414" width="3" height="12" fill="#111" stroke="none" stroke-width="0.8" /><rect x="425" y="414" width="7" height="12" fill="#111" stroke="none" stroke-width="0.8" /><rect x="435" y="411" width="4" height="22" fill="#111" stroke="none" stroke-width="0.8" /><rect x="364.5" y="447" width="38" height="17" fill="#111" stroke="none" stroke-width="0.8" /><rect x="365.5" y="449" width="2.2" height="4" fill="#e8e8e8" stroke="none" stroke-width="0.8" /><rect x="365.5" y="456.5" width="2.2" height="2.5" fill="#cfcfcf" stroke="none" stroke-width="0.8" /><rect x="368.9" y="449" width="2.2" height="4" fill="#e8e8e8" stroke="none" stroke-width="0.8" /><rect x="368.9" y="456.5" width="2.2" height="2.5" fill="#cfcfcf" stroke="none" stroke-width="0.8" /><rect x="372.3" y="449" width="2.2" height="4" fill="#e8e8e8" stroke="none" stroke-width="0.8" /><rect x="372.3" y="456.5" width="2.2" height="2.5" fill="#cfcfcf" stroke="none" stroke-width="0.8" /><rect x="375.7" y="449" width="2.2" height="4" fill="#e8e8e8" stroke="none" stroke-width="0.8" /><rect x="375.7" y="456.5" width="2.2" height="2.5" fill="#cfcfcf" stroke="none" stroke-width="0.8" /><rect x="379.1" y="449" width="2.2" height="4" fill="#e8e8e8" stroke="none" stroke-width="0.8" /><rect x="379.1" y="456.5" width="2.2" height="2.5" fill="#cfcfcf" stroke="none" stroke-width="0.8" /><rect x="382.5" y="449" width="2.2" height="4" fill="#e8e8e8" stroke="none" stroke-width="0.8" /><rect x="382.5" y="456.5" width="2.2" height="2.5" fill="#cfcfcf" stroke="none" stroke-width="0.8" /><rect x="385.9" y="449" width="2.2" height="4" fill="#e8e8e8" stroke="none" stroke-width="0.8" /><rect x="385.9" y="456.5" width="2.2" height="2.5" fill="#cfcfcf" stroke="none" stroke-width="0.8" /><rect x="389.3" y="449" width="2.2" height="4" fill="#e8e8e8" stroke="none" stroke-width="0.8" /><rect x="389.3" y="456.5" width="2.2" height="2.5" fill="#cfcfcf" stroke="none" stroke-width="0.8" /><rect x="392.7" y="449" width="2.2" height="4" fill="#e8e8e8" stroke="none" stroke-width="0.8" /><rect x="392.7" y="456.5" width="2.2" height="2.5" fill="#cfcfcf" stroke="none" stroke-width="0.8" /><rect x="396.1" y="449" width="2.2" height="4" fill="#e8e8e8" stroke="none" stroke-width="0.8" /><rect x="396.1" y="456.5" width="2.2" height="2.5" fill="#cfcfcf" stroke="none" stroke-width="0.8" /><rect x="399.5" y="449" width="2.2" height="4" fill="#e8e8e8" stroke="none" stroke-width="0.8" /><rect x="399.5" y="456.5" width="2.2" height="2.5" fill="#cfcfcf" stroke="none" stroke-width="0.8" /><rect x="404" y="451" width="37" height="8" fill="#111" stroke="none" stroke-width="0.8" /><rect x="363.7" y="483" width="88" height="16" fill="#c4c4c4" stroke="#555" stroke-width="0.8" /><rect x="505.3" y="152" width="104.8" height="348.2" fill="#d4d4d4" stroke="#7fb2ea" stroke-width="1" /><rect x="539" y="171" width="37" height="36.4" fill="#1e1e1e" stroke="none" stroke-width="0.8" /><rect x="540" y="172.8" width="35" height="1.5" fill="#8c8c8c" stroke="none" stroke-width="0.8" /><rect x="540" y="175.83636363636364" width="35" height="1.5" fill="#8c8c8c" stroke="none" stroke-width="0.8" /><rect x="540" y="178.87272727272727" width="35" height="1.5" fill="#8c8c8c" stroke="none" stroke-width="0.8" /><rect x="540" y="181.9090909090909" width="35" height="1.5" fill="#8c8c8c" stroke="none" stroke-width="0.8" /><rect x="540" y="184.94545454545457" width="35" height="1.5" fill="#8c8c8c" stroke="none" stroke-width="0.8" /><rect x="540" y="187.9818181818182" width="35" height="1.5" fill="#8c8c8c" stroke="none" stroke-width="0.8" /><rect x="540" y="191.01818181818183" width="35" height="1.5" fill="#8c8c8c" stroke="none" stroke-width="0.8" /><rect x="540" y="194.05454545454546" width="35" height="1.5" fill="#8c8c8c" stroke="none" stroke-width="0.8" /><rect x="540" y="197.0909090909091" width="35" height="1.5" fill="#8c8c8c" stroke="none" stroke-width="0.8" /><rect x="540" y="200.12727272727273" width="35" height="1.5" fill="#8c8c8c" stroke="none" stroke-width="0.8" /><rect x="540" y="203.16363636363639" width="35" height="1.5" fill="#8c8c8c" stroke="none" stroke-width="0.8" /><rect x="539" y="454.6" width="37" height="36" fill="#1e1e1e" stroke="none" stroke-width="0.8" /><rect x="540" y="456.40000000000003" width="35" height="1.5" fill="#8c8c8c" stroke="none" stroke-width="0.8" /><rect x="540" y="459.40000000000003" width="35" height="1.5" fill="#8c8c8c" stroke="none" stroke-width="0.8" /><rect x="540" y="462.40000000000003" width="35" height="1.5" fill="#8c8c8c" stroke="none" stroke-width="0.8" /><rect x="540" y="465.40000000000003" width="35" height="1.5" fill="#8c8c8c" stroke="none" stroke-width="0.8" /><rect x="540" y="468.40000000000003" width="35" height="1.5" fill="#8c8c8c" stroke="none" stroke-width="0.8" /><rect x="540" y="471.40000000000003" width="35" height="1.5" fill="#8c8c8c" stroke="none" stroke-width="0.8" /><rect x="540" y="474.40000000000003" width="35" height="1.5" fill="#8c8c8c" stroke="none" stroke-width="0.8" /><rect x="540" y="477.40000000000003" width="35" height="1.5" fill="#8c8c8c" stroke="none" stroke-width="0.8" /><rect x="540" y="480.40000000000003" width="35" height="1.5" fill="#8c8c8c" stroke="none" stroke-width="0.8" /><rect x="540" y="483.40000000000003" width="35" height="1.5" fill="#8c8c8c" stroke="none" stroke-width="0.8" /><rect x="540" y="486.40000000000003" width="35" height="1.5" fill="#8c8c8c" stroke="none" stroke-width="0.8" /><path d="M555.5 172 L558.5 172 L557 174.2 Z" fill="#fff"/><rect x="518.5" y="218" width="7.5" height="227" fill="#80c080" stroke="none" stroke-width="0.8" /><rect x="518.5" y="218" width="81.5" height="8" fill="#80c080" stroke="none" stroke-width="0.8" /><line x1="526" y1="226.3" x2="600" y2="226.3" stroke="#666" stroke-width="0.7"/><rect x="518.5" y="255.3" width="81.5" height="7.699999999999989" fill="#80c080" stroke="none" stroke-width="0.8" /><line x1="526" y1="263.3" x2="600" y2="263.3" stroke="#666" stroke-width="0.7"/><rect x="518.5" y="286" width="81.5" height="7" fill="#80c080" stroke="none" stroke-width="0.8" /><line x1="526" y1="293.3" x2="600" y2="293.3" stroke="#666" stroke-width="0.7"/><rect x="518.5" y="323.6" width="81.5" height="7.399999999999977" fill="#80c080" stroke="none" stroke-width="0.8" /><line x1="526" y1="331.3" x2="600" y2="331.3" stroke="#666" stroke-width="0.7"/><rect x="518.5" y="437.8" width="81.5" height="6.899999999999977" fill="#80c080" stroke="none" stroke-width="0.8" /><line x1="526" y1="445.0" x2="600" y2="445.0" stroke="#666" stroke-width="0.7"/><line x1="526.3" y1="226" x2="526.3" y2="255.3" stroke="#666" stroke-width="0.6"/><line x1="526.3" y1="263" x2="526.3" y2="286" stroke="#666" stroke-width="0.6"/><line x1="526.3" y1="293" x2="526.3" y2="323.6" stroke="#666" stroke-width="0.6"/><line x1="526.3" y1="331" x2="526.3" y2="437.8" stroke="#666" stroke-width="0.6"/><rect x="549.5" y="231.5" width="16" height="17" fill="#e6e6e6" stroke="#444" stroke-width="1" /><circle cx="557.5" cy="270" r="3" fill="#eee" stroke="#333" stroke-width="1.1"/><path d="M555.6 268.1 L559.4 271.9 M559.4 268.1 L555.6 271.9" stroke="#333" stroke-width="0.7" fill="none"/><rect x="549.5" y="301.5" width="16" height="16" fill="#d0d0d0" stroke="#444" stroke-width="1" /><circle cx="557.5" cy="309.5" r="5.5" fill="#e6e6e6" stroke="#222" stroke-width="0.8"/><path d="M555 309.5 H562 M556 308 V311" stroke="#222" stroke-width="0.7" fill="none"/><line x1="520.5" y1="222" x2="520.5" y2="441" stroke="#cc3a6a" stroke-width="0.7"/><line x1="522.5" y1="222" x2="522.5" y2="441" stroke="#cc3a6a" stroke-width="0.7"/><path d="M520.5 222.5 H565.5 V232 M553.5 222.5 V232 M555.5 222.5 V232 M557.5 222.5 V232 M563.5 222.5 V232" stroke="#cc3a6a" stroke-width="0.7" fill="none"/><path d="M553.5 249 V259.5 H520.5 M555.5 249 V259.5 M557.5 249 V259.5 M559.5 249 V259.5 M561.5 249 V259.5" stroke="#cc3a6a" stroke-width="0.7" fill="none"/><line x1="557.5" y1="259" x2="557.5" y2="301" stroke="#b0103a" stroke-width="1"/><path d="M520.5 289.5 H567.5 V327.5 H520.5 M551.5 289.5 V327.5 M557.5 289.5 V327.5" stroke="#cc3a6a" stroke-width="0.7" fill="none"/><path d="M522 441.3 H560 V472 M556.5 441.3 V472 M558.2 441.3 V472" stroke="#cc3a6a" stroke-width="0.55" fill="none"/><path d="M446.5 441.5 L449 438 H461 L478 439.5 L506 440 L522 441" stroke="#cc3a6a" stroke-width="0.6" fill="none"/><path d="M498 224 L508 223.5 L521 221.5" stroke="#cc3a6a" stroke-width="0.6" fill="none"/><rect x="546" y="439" width="4" height="1.5" fill="#7fd0e0"/></svg>
<div class="a" style="left:841px;top:75px;width:4px;height:530px;background:#14202c;"></div>
<div class="a" style="left:841.5px;top:329.7px;width:2px;height:21.3px;background:#57574f;"></div>
<div class="a" style="left:845px;top:76px;width:179px;height:17px;background:#37434f;"></div>
<div class="t" style="left:850px;top:80.33px;font-size:7px;line-height:7px;color:#dfe3e8;font-weight:normal;font-family:'Liberation Sans';transform:scaleX(0.87);transform-origin:0 0;">Installation zones</div>
<svg class="a" style="left:984px;top:79.5px" width="40" height="10" viewBox="0 0 40 10">
<path d="M2 3.5 L5 6.5 L8 3.5" stroke="#d6dae0" stroke-width="1" fill="none"/>
<path d="M17.5 1.5 H20.5 M18 1.5 V5 M20 1.5 V5 M17 5 H21 M19 5 V8.5" stroke="#c8cdd3" stroke-width="0.9" fill="none"/>
<path d="M30 2 L34.5 6.5 M34.5 2 L30 6.5" stroke="#f0f2f4" stroke-width="1.3" fill="none"/>
</svg>
<div class="a" style="left:845px;top:93px;width:179px;height:157px;background:#2e3b47;"></div>
<div class="a" style="left:847.5px;top:93px;width:174.5px;height:154.5px;border:1px solid #3b4651;border-top-color:#2a3440"></div>
<svg class="a" style="left:845px;top:93px" width="179" height="157" viewBox="0 0 179 157"><circle cx="14.5" cy="14.7" r="3.3" fill="#9cb6cf"/><circle cx="14.5" cy="27.7" r="2.8" fill="none" stroke="#9cb6cf" stroke-width="1.4"/><rect x="29" y="10" width="32" height="9.8" fill="#1c2733"/><rect x="36.2" y="26.5" width="1.6" height="124" fill="#f4f6f8"/><rect x="33" y="146.5" width="4" height="4.5" fill="none" stroke="#e8eaec" stroke-width="0.8"/><path d="M37 146.5 L40 148.75 L37 151" fill="none" stroke="#e8eaec" stroke-width="0.8"/><path d="M41 148.75 H43.5" stroke="#e8eaec" stroke-width="0.8"/></svg>
<div class="t" style="left:886px;top:120.82px;font-size:6.6px;line-height:6.6px;color:#f2f3f5;font-weight:bold;font-family:'Liberation Serif';transform:scaleX(1.22);transform-origin:0 0;">-100</div>
<div class="t" style="left:894.5px;top:240.32px;font-size:6.6px;line-height:6.6px;color:#f2f3f5;font-weight:bold;font-family:'Liberation Serif';transform:scaleX(1.22);transform-origin:0 0;">0</div>
<div class="a" style="left:845px;top:249.5px;width:179px;height:4.5px;background:#14202c;"></div>
<div class="a" style="left:924px;top:251px;width:31px;height:1.2px;background:#5d5a55;"></div>
<div class="a" style="left:845px;top:254px;width:179px;height:17px;background:#37434f;"></div>
<div class="t" style="left:850px;top:258.33px;font-size:7px;line-height:7px;color:#dfe3e8;font-weight:normal;font-family:'Liberation Sans';transform:scaleX(0.87);transform-origin:0 0;">Preview</div>
<svg class="a" style="left:984px;top:257.5px" width="40" height="10" viewBox="0 0 40 10">
<path d="M2 3.5 L5 6.5 L8 3.5" stroke="#d6dae0" stroke-width="1" fill="none"/>
<path d="M17.5 1.5 H20.5 M18 1.5 V5 M20 1.5 V5 M17 5 H21 M19 5 V8.5" stroke="#c8cdd3" stroke-width="0.9" fill="none"/>
<path d="M30 2 L34.5 6.5 M34.5 2 L30 6.5" stroke="#f0f2f4" stroke-width="1.3" fill="none"/>
</svg>
<div class="a" style="left:845px;top:271px;width:179px;height:103px;background:#2e3b47;"></div>
<div class="a" style="left:847px;top:271px;width:175px;height:100.5px;border:1px solid #55595c"></div>
<div class="a" style="left:845px;top:373.5px;width:179px;height:4.5px;background:#14202c;"></div>
<div class="a" style="left:924px;top:375.5px;width:21px;height:1.2px;background:#5d5a55;"></div>
<div class="a" style="left:845px;top:378px;width:179px;height:17px;background:#37434f;"></div>
<div class="t" style="left:850px;top:382.33px;font-size:7px;line-height:7px;color:#dfe3e8;font-weight:normal;font-family:'Liberation Sans';transform:scaleX(0.87);transform-origin:0 0;">Symbol Explorer</div>
<svg class="a" style="left:984px;top:381.5px" width="40" height="10" viewBox="0 0 40 10">
<path d="M2 3.5 L5 6.5 L8 3.5" stroke="#d6dae0" stroke-width="1" fill="none"/>
<path d="M17.5 1.5 H20.5 M18 1.5 V5 M20 1.5 V5 M17 5 H21 M19 5 V8.5" stroke="#c8cdd3" stroke-width="0.9" fill="none"/>
<path d="M30 2 L34.5 6.5 M34.5 2 L30 6.5" stroke="#f0f2f4" stroke-width="1.3" fill="none"/>
</svg>
<div class="a" style="left:845px;top:395px;width:179px;height:210px;background:#2e3b47;"></div>
<svg class="a" style="left:845px;top:395px" width="179" height="19" viewBox="0 0 179 19">
<path d="M9.5 7.5 H12.7 L11.1 10.3 Z" fill="#e8ebee"/>
<path d="M23 6 H31 M23 9 H31 M23 12 H31" stroke="#d3d7dc" stroke-width="0.8"/><path d="M25 5 V7 M29 8 V10 M26 11 V13" stroke="#d3d7dc" stroke-width="1"/>
<path d="M38.5 5.5 H41 L42 6.5 H46.5 V12.5 H38.5 Z" stroke="#5e6770" fill="none" stroke-width="0.8"/><path d="M40.5 14 H48 V8" stroke="#5e6770" fill="none" stroke-width="0.8"/>
<path d="M58 6.5 A3.6 3.6 0 1 0 58.5 11" stroke="#d3d7dc" fill="none" stroke-width="0.9"/><path d="M56.5 4.7 L60 5 L58.8 8 Z" fill="#eef0f2"/>
<path d="M71 4.5 H76 V11 H71 Z M73 6.5 H78.5 V13.5 H73 Z" stroke="#d3d7dc" fill="#2e3b47" stroke-width="0.8"/><rect x="74.5" y="9" width="2.5" height="2.5" fill="none" stroke="#d3d7dc" stroke-width="0.7"/>
<path d="M85.5 3.5 V15.5" stroke="#4a5560" stroke-width="0.8"/>
</svg>
<div class="t" style="left:935px;top:401.83px;font-size:7px;line-height:7px;color:#d6dade;font-weight:normal;font-family:'Liberation Sans';transform:scaleX(0.85);transform-origin:0 0;">Filter:</div>
<div class="a" style="left:954px;top:400px;width:70px;height:10.5px;background:#1b2631;"></div>
<div class="a" style="left:958px;top:401.5px;width:8px;height:8px;background:#7f6bc0;"></div>
<div class="t" style="left:972px;top:402.13px;font-size:7px;line-height:7px;color:#e3e7eb;font-weight:normal;font-family:'Liberation Sans';transform:scaleX(0.83);transform-origin:0 0;">Electrical Installation</div>
<div class="a" style="left:848.5px;top:414px;width:173.5px;height:161.7px;border:1px solid #3b4651"></div>
<div class="a" style="left:1010px;top:416.5px;width:9.5px;height:158px;background:#f0f0f0;"></div>
<div class="a" style="left:1011px;top:424.5px;width:7.5px;height:104px;background:#cdcdcd;"></div>
<svg class="a" style="left:1010px;top:416.5px" width="10" height="158" viewBox="0 0 10 158"><path d="M2.8 4.8 L4.75 2.8 L6.7 4.8" stroke="#555" fill="none" stroke-width="0.9"/><path d="M2.8 152.5 L4.75 154.5 L6.7 152.5" stroke="#555" fill="none" stroke-width="0.9"/></svg>
<div class="a" style="left:857.5px;top:427px;width:0.8px;height:148px;background:#56606b;"></div>
<svg class="a" style="left:854.5px;top:419.8px" width="6" height="6" viewBox="0 0 6 6"><rect x="0.5" y="0.5" width="5" height="5" fill="#d8dce2" stroke="#9aa2ab" stroke-width="0.6"/><path d="M1.6 3 H4.4 M3 1.6 V4.4" stroke="#3a4a7a" stroke-width="0.8"/></svg>
<svg class="a" style="left:866px;top:418.8px" width="10" height="9" viewBox="0 0 10 9"><path d="M0.5 8 V1.5 H3.5 L4.5 2.5 H8.5 V4 M0.5 8 L2 4 H9.5 L8 8 Z" fill="none" stroke="#c9ced4" stroke-width="0.8"/></svg>
<div class="t" style="left:880px;top:419.23px;font-size:7px;line-height:7px;color:#e3e7eb;font-weight:normal;font-family:'Liberation Sans';transform:scaleX(0.81);transform-origin:0 0;">Not categorized</div>
<svg class="a" style="left:854.5px;top:430.48px" width="6" height="6" viewBox="0 0 6 6"><rect x="0.5" y="0.5" width="5" height="5" fill="#d8dce2" stroke="#9aa2ab" stroke-width="0.6"/><path d="M1.6 3 H4.4 M3 1.6 V4.4" stroke="#3a4a7a" stroke-width="0.8"/></svg>
<svg class="a" style="left:866px;top:429.48px" width="10" height="9" viewBox="0 0 10 9"><path d="M0.5 8 V1.5 H3.5 L4.5 2.5 H8.5 V4 M0.5 8 L2 4 H9.5 L8 8 Z" fill="none" stroke="#c9ced4" stroke-width="0.8"/></svg>
<div class="t" style="left:880px;top:429.91px;font-size:7px;line-height:7px;color:#e3e7eb;font-weight:normal;font-family:'Liberation Sans';transform:scaleX(0.81);transform-origin:0 0;">Undefined</div>
<svg class="a" style="left:854.5px;top:441.16px" width="6" height="6" viewBox="0 0 6 6"><rect x="0.5" y="0.5" width="5" height="5" fill="#d8dce2" stroke="#9aa2ab" stroke-width="0.6"/><path d="M1.6 3 H4.4 M3 1.6 V4.4" stroke="#3a4a7a" stroke-width="0.8"/></svg>
<svg class="a" style="left:866px;top:440.16px" width="10" height="9" viewBox="0 0 10 9"><path d="M0.5 8 V1.5 H3.5 L4.5 2.5 H8.5 V4 M0.5 8 L2 4 H9.5 L8 8 Z" fill="none" stroke="#c9ced4" stroke-width="0.8"/></svg>
<div class="t" style="left:880px;top:440.59px;font-size:7px;line-height:7px;color:#e3e7eb;font-weight:normal;font-family:'Liberation Sans';transform:scaleX(0.81);transform-origin:0 0;">Alarm/safety</div>
<svg class="a" style="left:854.5px;top:451.84000000000003px" width="6" height="6" viewBox="0 0 6 6"><rect x="0.5" y="0.5" width="5" height="5" fill="#d8dce2" stroke="#9aa2ab" stroke-width="0.6"/><path d="M1.6 3 H4.4 M3 1.6 V4.4" stroke="#3a4a7a" stroke-width="0.8"/></svg>
<svg class="a" style="left:866px;top:450.84000000000003px" width="10" height="9" viewBox="0 0 10 9"><path d="M0.5 8 V1.5 H3.5 L4.5 2.5 H8.5 V4 M0.5 8 L2 4 H9.5 L8 8 Z" fill="none" stroke="#c9ced4" stroke-width="0.8"/></svg>
<div class="t" style="left:880px;top:451.27px;font-size:7px;line-height:7px;color:#e3e7eb;font-weight:normal;font-family:'Liberation Sans';transform:scaleX(0.81);transform-origin:0 0;">Antenna</div>
<svg class="a" style="left:854.5px;top:462.52px" width="6" height="6" viewBox="0 0 6 6"><rect x="0.5" y="0.5" width="5" height="5" fill="#d8dce2" stroke="#9aa2ab" stroke-width="0.6"/><path d="M1.6 3 H4.4 M3 1.6 V4.4" stroke="#3a4a7a" stroke-width="0.8"/></svg>
<svg class="a" style="left:866px;top:461.52px" width="10" height="9" viewBox="0 0 10 9"><path d="M0.5 8 V1.5 H3.5 L4.5 2.5 H8.5 V4 M0.5 8 L2 4 H9.5 L8 8 Z" fill="none" stroke="#c9ced4" stroke-width="0.8"/></svg>
<div class="t" style="left:880px;top:461.95px;font-size:7px;line-height:7px;color:#e3e7eb;font-weight:normal;font-family:'Liberation Sans';transform:scaleX(0.81);transform-origin:0 0;">Drives/Motors</div>
<svg class="a" style="left:854.5px;top:473.2px" width="6" height="6" viewBox="0 0 6 6"><rect x="0.5" y="0.5" width="5" height="5" fill="#d8dce2" stroke="#9aa2ab" stroke-width="0.6"/><path d="M1.6 3 H4.4 M3 1.6 V4.4" stroke="#3a4a7a" stroke-width="0.8"/></svg>
<svg class="a" style="left:866px;top:472.2px" width="10" height="9" viewBox="0 0 10 9"><path d="M0.5 8 V1.5 H3.5 L4.5 2.5 H8.5 V4 M0.5 8 L2 4 H9.5 L8 8 Z" fill="none" stroke="#c9ced4" stroke-width="0.8"/></svg>
<div class="t" style="left:880px;top:472.63px;font-size:7px;line-height:7px;color:#e3e7eb;font-weight:normal;font-family:'Liberation Sans';transform:scaleX(0.81);transform-origin:0 0;">Protection against lightning</div>
<svg class="a" style="left:854.5px;top:483.88px" width="6" height="6" viewBox="0 0 6 6"><rect x="0.5" y="0.5" width="5" height="5" fill="#d8dce2" stroke="#9aa2ab" stroke-width="0.6"/><path d="M1.6 3 H4.4 M3 1.6 V4.4" stroke="#3a4a7a" stroke-width="0.8"/></svg>
<svg class="a" style="left:866px;top:482.88px" width="10" height="9" viewBox="0 0 10 9"><path d="M0.5 8 V1.5 H3.5 L4.5 2.5 H8.5 V4 M0.5 8 L2 4 H9.5 L8 8 Z" fill="none" stroke="#c9ced4" stroke-width="0.8"/></svg>
<div class="t" style="left:880px;top:483.31px;font-size:7px;line-height:7px;color:#e3e7eb;font-weight:normal;font-family:'Liberation Sans';transform:scaleX(0.81);transform-origin:0 0;">fire call</div>
<svg class="a" style="left:854.5px;top:494.56px" width="6" height="6" viewBox="0 0 6 6"><rect x="0.5" y="0.5" width="5" height="5" fill="#d8dce2" stroke="#9aa2ab" stroke-width="0.6"/><path d="M1.6 3 H4.4 M3 1.6 V4.4" stroke="#3a4a7a" stroke-width="0.8"/></svg>
<svg class="a" style="left:866px;top:493.56px" width="10" height="9" viewBox="0 0 10 9"><path d="M0.5 8 V1.5 H3.5 L4.5 2.5 H8.5 V4 M0.5 8 L2 4 H9.5 L8 8 Z" fill="none" stroke="#c9ced4" stroke-width="0.8"/></svg>
<div class="t" style="left:880px;top:493.99px;font-size:7px;line-height:7px;color:#e3e7eb;font-weight:normal;font-family:'Liberation Sans';transform:scaleX(0.81);transform-origin:0 0;">IT information technology</div>
<svg class="a" style="left:854.5px;top:505.24px" width="6" height="6" viewBox="0 0 6 6"><rect x="0.5" y="0.5" width="5" height="5" fill="#d8dce2" stroke="#9aa2ab" stroke-width="0.6"/><path d="M1.6 3 H4.4 M3 1.6 V4.4" stroke="#3a4a7a" stroke-width="0.8"/></svg>
<svg class="a" style="left:866px;top:504.24px" width="10" height="9" viewBox="0 0 10 9"><path d="M0.5 8 V1.5 H3.5 L4.5 2.5 H8.5 V4 M0.5 8 L2 4 H9.5 L8 8 Z" fill="none" stroke="#c9ced4" stroke-width="0.8"/></svg>
<div class="t" style="left:880px;top:504.67px;font-size:7px;line-height:7px;color:#e3e7eb;font-weight:normal;font-family:'Liberation Sans';transform:scaleX(0.81);transform-origin:0 0;">KNX installation</div>
<svg class="a" style="left:854.5px;top:515.9200000000001px" width="6" height="6" viewBox="0 0 6 6"><rect x="0.5" y="0.5" width="5" height="5" fill="#d8dce2" stroke="#9aa2ab" stroke-width="0.6"/><path d="M1.6 3 H4.4 M3 1.6 V4.4" stroke="#3a4a7a" stroke-width="0.8"/></svg>
<svg class="a" style="left:866px;top:514.9200000000001px" width="10" height="9" viewBox="0 0 10 9"><path d="M0.5 8 V1.5 H3.5 L4.5 2.5 H8.5 V4 M0.5 8 L2 4 H9.5 L8 8 Z" fill="none" stroke="#c9ced4" stroke-width="0.8"/></svg>
<div class="t" style="left:880px;top:515.35px;font-size:7px;line-height:7px;color:#e3e7eb;font-weight:normal;font-family:'Liberation Sans';transform:scaleX(0.81);transform-origin:0 0;">Equipment</div>
<svg class="a" style="left:854.5px;top:526.6px" width="6" height="6" viewBox="0 0 6 6"><rect x="0.5" y="0.5" width="5" height="5" fill="#d8dce2" stroke="#9aa2ab" stroke-width="0.6"/><path d="M1.6 3 H4.4 M3 1.6 V4.4" stroke="#3a4a7a" stroke-width="0.8"/></svg>
<svg class="a" style="left:866px;top:525.6px" width="10" height="9" viewBox="0 0 10 9"><path d="M0.5 8 V1.5 H3.5 L4.5 2.5 H8.5 V4 M0.5 8 L2 4 H9.5 L8 8 Z" fill="none" stroke="#c9ced4" stroke-width="0.8"/></svg>
<div class="t" style="left:880px;top:526.03px;font-size:7px;line-height:7px;color:#e3e7eb;font-weight:normal;font-family:'Liberation Sans';transform:scaleX(0.81);transform-origin:0 0;">Electrical devices</div>
<svg class="a" style="left:854.5px;top:537.28px" width="6" height="6" viewBox="0 0 6 6"><rect x="0.5" y="0.5" width="5" height="5" fill="#d8dce2" stroke="#9aa2ab" stroke-width="0.6"/><path d="M1.6 3 H4.4 M3 1.6 V4.4" stroke="#3a4a7a" stroke-width="0.8"/></svg>
<svg class="a" style="left:866px;top:536.28px" width="10" height="9" viewBox="0 0 10 9"><path d="M0.5 8 V1.5 H3.5 L4.5 2.5 H8.5 V4 M0.5 8 L2 4 H9.5 L8 8 Z" fill="none" stroke="#c9ced4" stroke-width="0.8"/></svg>
<div class="t" style="left:880px;top:536.71px;font-size:7px;line-height:7px;color:#e3e7eb;font-weight:normal;font-family:'Liberation Sans';transform:scaleX(0.81);transform-origin:0 0;">Emergency-/rescue exit</div>
<svg class="a" style="left:854.5px;top:547.96px" width="6" height="6" viewBox="0 0 6 6"><rect x="0.5" y="0.5" width="5" height="5" fill="#d8dce2" stroke="#9aa2ab" stroke-width="0.6"/><path d="M1.6 3 H4.4 M3 1.6 V4.4" stroke="#3a4a7a" stroke-width="0.8"/></svg>
<svg class="a" style="left:866px;top:546.96px" width="10" height="9" viewBox="0 0 10 9"><path d="M0.5 8 V1.5 H3.5 L4.5 2.5 H8.5 V4 M0.5 8 L2 4 H9.5 L8 8 Z" fill="none" stroke="#c9ced4" stroke-width="0.8"/></svg>
<div class="t" style="left:880px;top:547.39px;font-size:7px;line-height:7px;color:#e3e7eb;font-weight:normal;font-family:'Liberation Sans';transform:scaleX(0.81);transform-origin:0 0;">Floor plan</div>
<svg class="a" style="left:854.5px;top:558.64px" width="6" height="6" viewBox="0 0 6 6"><rect x="0.5" y="0.5" width="5" height="5" fill="#d8dce2" stroke="#9aa2ab" stroke-width="0.6"/><path d="M1.6 3 H4.4 M3 1.6 V4.4" stroke="#3a4a7a" stroke-width="0.8"/></svg>
<svg class="a" style="left:866px;top:557.64px" width="10" height="9" viewBox="0 0 10 9"><path d="M0.5 8 V1.5 H3.5 L4.5 2.5 H8.5 V4 M0.5 8 L2 4 H9.5 L8 8 Z" fill="none" stroke="#c9ced4" stroke-width="0.8"/></svg>
<div class="t" style="left:880px;top:558.07px;font-size:7px;line-height:7px;color:#e3e7eb;font-weight:normal;font-family:'Liberation Sans';transform:scaleX(0.81);transform-origin:0 0;">Lamps</div>
<svg class="a" style="left:854.5px;top:569.3199999999999px" width="6" height="6" viewBox="0 0 6 6"><rect x="0.5" y="0.5" width="5" height="5" fill="#d8dce2" stroke="#9aa2ab" stroke-width="0.6"/><path d="M1.6 3 H4.4 M3 1.6 V4.4" stroke="#3a4a7a" stroke-width="0.8"/></svg>
<svg class="a" style="left:866px;top:568.3199999999999px" width="10" height="9" viewBox="0 0 10 9"><path d="M0.5 8 V1.5 H3.5 L4.5 2.5 H8.5 V4 M0.5 8 L2 4 H9.5 L8 8 Z" fill="none" stroke="#c9ced4" stroke-width="0.8"/></svg>
<div class="t" style="left:880px;top:568.75px;font-size:7px;line-height:7px;color:#e3e7eb;font-weight:normal;font-family:'Liberation Sans';transform:scaleX(0.81);transform-origin:0 0;">Switch/Power socket</div>
<div class="a" style="left:848px;top:577.5px;width:22px;height:11px;background:#27323d;"></div>
<div class="t" style="left:850.3px;top:579.63px;font-size:7px;line-height:7px;color:#e3e7eb;font-weight:normal;font-family:'Liberation Sans';transform:scaleX(0.84);transform-origin:0 0;">Library</div>
<div class="a" style="left:872px;top:577.5px;width:35px;height:11px;background:#27323d;"></div>
<div class="t" style="left:874.3px;top:579.63px;font-size:7px;line-height:7px;color:#e3e7eb;font-weight:normal;font-family:'Liberation Sans';transform:scaleX(0.84);transform-origin:0 0;">Designation</div>
<div class="a" style="left:907px;top:578px;width:29.5px;height:11.5px;background:#37434f;"></div>
<div class="t" style="left:909.3px;top:580.93px;font-size:7px;line-height:7px;color:#e3e7eb;font-weight:normal;font-family:'Liberation Sans';transform:scaleX(0.84);transform-origin:0 0;">Category</div>
<div class="a" style="left:937.5px;top:577.5px;width:23px;height:11px;background:#27323d;"></div>
<div class="t" style="left:939.8px;top:579.63px;font-size:7px;line-height:7px;color:#e3e7eb;font-weight:normal;font-family:'Liberation Sans';transform:scaleX(0.84);transform-origin:0 0;">Search</div>
<div class="a" style="left:961px;top:577.5px;width:28px;height:11px;background:#27323d;"></div>
<div class="t" style="left:963.3px;top:579.63px;font-size:7px;line-height:7px;color:#e3e7eb;font-weight:normal;font-family:'Liberation Sans';transform:scaleX(0.84);transform-origin:0 0;">Favorites</div>
<div class="a" style="left:845px;top:591.5px;width:179px;height:12px;background:#2e3b47;"></div>
<div class="a" style="left:846px;top:591.8px;width:56px;height:11.5px;background:#27323d;"></div>
<div class="a" style="left:1018px;top:591.8px;width:6px;height:11.5px;background:#14202c;"></div>
<svg class="a" style="left:847px;top:592.5px" width="10" height="10" viewBox="0 0 10 10"><path d="M1.5 1 H4.5 V8.5 H1.5 Z M1 3 H5 M3 8.5 V9.5" stroke="#b9bfc5" fill="none" stroke-width="0.8"/><path d="M5.5 4 L7 8.5" stroke="#b9bfc5" stroke-width="0.8"/></svg>
<svg class="a" style="left:904px;top:592.5px" width="10" height="10" viewBox="0 0 10 10"><rect x="1" y="1.5" width="7" height="6" fill="none" stroke="#b9bfc5" stroke-width="0.8"/><path d="M1 3.5 H8 M1 5.5 H8 M3.5 1.5 V7.5 M5.5 1.5 V7.5" stroke="#b9bfc5" stroke-width="0.6"/><path d="M7 7.5 L8.5 9" stroke="#b9bfc5" stroke-width="0.8"/></svg>
<svg class="a" style="left:961px;top:592.5px" width="10" height="10" viewBox="0 0 10 10"><path d="M2 1 H6.5 V9 H2 Z M3 3 H5.5 M3 5 H5.5 M3 7 H5.5" stroke="#b9bfc5" fill="none" stroke-width="0.7"/></svg>
<div class="t" style="left:855.5px;top:594.23px;font-size:7px;line-height:7px;color:#e3e7eb;font-weight:normal;font-family:'Liberation Sans';transform:scaleX(0.85);transform-origin:0 0;">Symbol Explorer</div>
<div class="t" style="left:914px;top:594.23px;font-size:7px;line-height:7px;color:#e3e7eb;font-weight:normal;font-family:'Liberation Sans';transform:scaleX(0.85);transform-origin:0 0;">Macro Explorer</div>
<div class="t" style="left:970px;top:594.23px;font-size:7px;line-height:7px;color:#e3e7eb;font-weight:normal;font-family:'Liberation Sans';transform:scaleX(0.85);transform-origin:0 0;">Material Explorer</div>
<div class="a" style="left:0px;top:605px;width:1024px;height:14px;background:#37424e;"></div>
<div class="a" style="left:0px;top:604.5px;width:1024px;height:0.8px;background:#2b3540;"></div>
<div class="a" style="left:56.8px;top:607px;width:0.8px;height:11px;background:#2a3440;"></div>
<div class="a" style="left:862.5px;top:607px;width:0.8px;height:11px;background:#2a3440;"></div>
<div class="a" style="left:915.5px;top:607px;width:0.8px;height:11px;background:#2a3440;"></div>
<div class="a" style="left:969.3px;top:607px;width:0.8px;height:11px;background:#2a3440;"></div>
<div class="t" style="left:5.5px;top:608.83px;font-size:7px;line-height:7px;color:#d8dce0;font-weight:normal;font-family:'Liberation Sans';transform:scaleX(0.88);transform-origin:0 0;">Ready</div>
<div class="t" style="left:864.5px;top:608.83px;font-size:7px;line-height:7px;color:#d8dce0;font-weight:normal;font-family:'Liberation Sans';transform:scaleX(0.88);transform-origin:0 0;">107%</div>
<div class="t" style="left:918px;top:608.83px;font-size:7px;line-height:7px;color:#d8dce0;font-weight:normal;font-family:'Liberation Sans';transform:scaleX(0.965);transform-origin:0 0;">1735,5/312 mm</div>
<div class="t" style="left:973px;top:608.83px;font-size:7px;line-height:7px;color:#d8dce0;font-weight:normal;font-family:'Liberation Sans';transform:scaleX(0.9);transform-origin:0 0;">4&nbsp; DIN A4&nbsp; 1:13</div>
<div class="a" style="left:289px;top:17px;width:112px;height:189.5px;background:#16212d;box-shadow:1.5px 1.5px 2px rgba(0,0,0,0.35)"></div>
<div class="a" style="left:289px;top:161px;width:112px;height:14px;background:#2479b5;"></div>
<div class="a" style="left:303px;top:75.5px;width:92px;height:0.8px;background:#1c2733;"></div>
<div class="t" style="left:303px;top:19.93px;font-size:7px;line-height:7px;color:#eceff2;font-weight:normal;font-family:'Liberation Sans';transform:scaleX(0.84);transform-origin:0 0;">Editors</div>
<svg class="a" style="left:392px;top:20.900000000000002px" width="5" height="7" viewBox="0 0 5 7"><path d="M0.5 0.5 L4.5 3.5 L0.5 6.5 Z" fill="#f2f4f6"/></svg>
<div class="t" style="left:303px;top:33.73px;font-size:7px;line-height:7px;color:#eceff2;font-weight:normal;font-family:'Liberation Sans';transform:scaleX(0.84);transform-origin:0 0;">Foreign languages</div>
<svg class="a" style="left:392px;top:34.7px" width="5" height="7" viewBox="0 0 5 7"><path d="M0.5 0.5 L4.5 3.5 L0.5 6.5 Z" fill="#f2f4f6"/></svg>
<div class="t" style="left:303px;top:47.63px;font-size:7px;line-height:7px;color:#eceff2;font-weight:normal;font-family:'Liberation Sans';transform:scaleX(0.84);transform-origin:0 0;">Master data</div>
<svg class="a" style="left:392px;top:48.6px" width="5" height="7" viewBox="0 0 5 7"><path d="M0.5 0.5 L4.5 3.5 L0.5 6.5 Z" fill="#f2f4f6"/></svg>
<div class="t" style="left:303px;top:61.53px;font-size:7px;line-height:7px;color:#eceff2;font-weight:normal;font-family:'Liberation Sans';transform:scaleX(0.84);transform-origin:0 0;">Data import</div>
<svg class="a" style="left:392px;top:62.50000000000001px" width="5" height="7" viewBox="0 0 5 7"><path d="M0.5 0.5 L4.5 3.5 L0.5 6.5 Z" fill="#f2f4f6"/></svg>
<div class="t" style="left:303px;top:80.33px;font-size:7px;line-height:7px;color:#eceff2;font-weight:normal;font-family:'Liberation Sans';transform:scaleX(0.84);transform-origin:0 0;">Wire name</div>
<svg class="a" style="left:392px;top:81.3px" width="5" height="7" viewBox="0 0 5 7"><path d="M0.5 0.5 L4.5 3.5 L0.5 6.5 Z" fill="#f2f4f6"/></svg>
<div class="t" style="left:303px;top:94.13px;font-size:7px;line-height:7px;color:#eceff2;font-weight:normal;font-family:'Liberation Sans';transform:scaleX(0.84);transform-origin:0 0;">Numbering</div>
<svg class="a" style="left:392px;top:95.1px" width="5" height="7" viewBox="0 0 5 7"><path d="M0.5 0.5 L4.5 3.5 L0.5 6.5 Z" fill="#f2f4f6"/></svg>
<div class="t" style="left:303px;top:108.13px;font-size:7px;line-height:7px;color:#eceff2;font-weight:normal;font-family:'Liberation Sans';transform:scaleX(0.84);transform-origin:0 0;">Data sheets/descriptions</div>
<svg class="a" style="left:392px;top:109.1px" width="5" height="7" viewBox="0 0 5 7"><path d="M0.5 0.5 L4.5 3.5 L0.5 6.5 Z" fill="#f2f4f6"/></svg>
<div class="t" style="left:303px;top:121.93px;font-size:7px;line-height:7px;color:#eceff2;font-weight:normal;font-family:'Liberation Sans';transform:scaleX(0.84);transform-origin:0 0;">Build project part database</div>
<div class="t" style="left:303px;top:135.93px;font-size:7px;line-height:7px;color:#eceff2;font-weight:normal;font-family:'Liberation Sans';transform:scaleX(0.84);transform-origin:0 0;">Check</div>
<svg class="a" style="left:392px;top:136.9px" width="5" height="7" viewBox="0 0 5 7"><path d="M0.5 0.5 L4.5 3.5 L0.5 6.5 Z" fill="#f2f4f6"/></svg>
<div class="t" style="left:303px;top:149.73px;font-size:7px;line-height:7px;color:#eceff2;font-weight:normal;font-family:'Liberation Sans';transform:scaleX(0.84);transform-origin:0 0;">Automatic</div>
<svg class="a" style="left:392px;top:150.7px" width="5" height="7" viewBox="0 0 5 7"><path d="M0.5 0.5 L4.5 3.5 L0.5 6.5 Z" fill="#f2f4f6"/></svg>
<div class="t" style="left:303px;top:163.73px;font-size:7px;line-height:7px;color:#eceff2;font-weight:normal;font-family:'Liberation Sans';transform:scaleX(0.84);transform-origin:0 0;">Cabinet</div>
<svg class="a" style="left:392px;top:164.7px" width="5" height="7" viewBox="0 0 5 7"><path d="M0.5 0.5 L4.5 3.5 L0.5 6.5 Z" fill="#f2f4f6"/></svg>
<div class="t" style="left:303px;top:182.33px;font-size:7px;line-height:7px;color:#eceff2;font-weight:normal;font-family:'Liberation Sans';transform:scaleX(0.84);transform-origin:0 0;">Configuration settings</div>
<svg class="a" style="left:392px;top:183.29999999999998px" width="5" height="7" viewBox="0 0 5 7"><path d="M0.5 0.5 L4.5 3.5 L0.5 6.5 Z" fill="#f2f4f6"/></svg>
<div class="t" style="left:303px;top:196.13px;font-size:7px;line-height:7px;color:#eceff2;font-weight:normal;font-family:'Liberation Sans';transform:scaleX(0.84);transform-origin:0 0;">Settings (Options) ...</div>
<div class="a" style="left:400.5px;top:161px;width:107.5px;height:116px;background:#16212d;box-shadow:1.5px 1.5px 2px rgba(0,0,0,0.35)"></div>
<div class="a" style="left:400.5px;top:161px;width:107.5px;height:17px;background:#2479b5;"></div>
<div class="t" style="left:416.5px;top:164.83px;font-size:7px;line-height:7px;color:#eceff2;font-weight:normal;font-family:'Liberation Sans';transform:scaleX(0.86);transform-origin:0 0;">Routing</div>
<div class="t" style="left:416.5px;top:180.63px;font-size:7px;line-height:7px;color:#eceff2;font-weight:normal;font-family:'Liberation Sans';transform:scaleX(0.86);transform-origin:0 0;">Import external wiring</div>
<div class="t" style="left:416.5px;top:195.83px;font-size:7px;line-height:7px;color:#eceff2;font-weight:normal;font-family:'Liberation Sans';transform:scaleX(0.86);transform-origin:0 0;">Refresh parts</div>
<div class="t" style="left:416.5px;top:212.63px;font-size:7px;line-height:7px;color:#eceff2;font-weight:normal;font-family:'Liberation Sans';transform:scaleX(0.86);transform-origin:0 0;">Mounting aid on/off</div>
<div class="t" style="left:416.5px;top:229.63px;font-size:7px;line-height:7px;color:#eceff2;font-weight:normal;font-family:'Liberation Sans';transform:scaleX(0.86);transform-origin:0 0;">Automatic routing on/off</div>
<div class="t" style="left:416.5px;top:246.83px;font-size:7px;line-height:7px;color:#eceff2;font-weight:normal;font-family:'Liberation Sans';transform:scaleX(0.86);transform-origin:0 0;">3D overlay points</div>
<div class="t" style="left:416.5px;top:263.83px;font-size:7px;line-height:7px;color:#eceff2;font-weight:normal;font-family:'Liberation Sans';transform:scaleX(0.86);transform-origin:0 0;">Optimize Z distances</div>
<svg class="a" style="left:400px;top:160px" width="16" height="16" viewBox="-8 -8 16 16"><g transform="translate(0.5 0.5)"><path d="M-5 0 H2 V-4 H5 M-4 0 V2 M-1 0 V2 M5 -4 V-5" stroke="#d3d7dc" stroke-width="1" fill="none"/></g></svg>
<svg class="a" style="left:400px;top:191px" width="16" height="16" viewBox="-8 -8 16 16"><g transform="translate(0.5 0.5)"><rect x="-4.5" y="-4.5" width="6.5" height="2.5" stroke="#d3d7dc" stroke-width="0.8" fill="none"/><rect x="-4.5" y="-1.5" width="8" height="3" stroke="#d3d7dc" stroke-width="0.8" fill="none"/><rect x="-2.5" y="1.5" width="5.5" height="2.5" stroke="#d3d7dc" stroke-width="0.8" fill="none"/><circle cx="4" cy="4.3" r="1.4" fill="none" stroke="#33c033" stroke-width="0.9"/></g></svg>
<svg class="a" style="left:400px;top:208px" width="16" height="16" viewBox="-8 -8 16 16"><g transform="translate(0.5 0.5)"><path d="M-3.5 -3.5 H2.5 V4.5 H-3.5 Z M-1.5 -5 H4.5 V3" stroke="#d3d7dc" stroke-width="0.8" fill="none"/><rect x="-1.8" y="-2.5" width="2.6" height="6" fill="#3fcf3f"/></g></svg>
<svg class="a" style="left:400px;top:225px" width="16" height="16" viewBox="-8 -8 16 16"><g transform="translate(0.5 0.5)"><path d="M-5 0 H2 V-4 H5 M-4 0 V2 M-1 0 V2 M5 -4 V-5" stroke="#d3d7dc" stroke-width="1" fill="none"/></g></svg>
<svg class="a" style="left:400px;top:242px" width="16" height="16" viewBox="-8 -8 16 16"><g transform="translate(0.5 0.5)"><path d="M-4.5 -4 V4 M4.5 -4 V4 M-4.5 -2.5 H4.5 M-4.5 1.5 H4.5" stroke="#d3d7dc" stroke-width="0.9"/><circle cx="-4" cy="4.5" r="1.2" fill="#e04020"/><circle cx="4" cy="4.5" r="1.2" fill="#e04020"/></g></svg>
<svg class="a" style="left:400px;top:259px" width="16" height="16" viewBox="-8 -8 16 16"><g transform="translate(0.5 0.5)"><path d="M-4.5 -1.5 L0 -4 L4.5 -1.5 L0 1 Z" fill="#4ddb4d"/><path d="M-4.5 0.5 L0 3 L4.5 0.5 M-4.5 2.5 L0 5 L4.5 2.5 M5.5 -1 V5.5 H1" stroke="#d3d7dc" stroke-width="0.8" fill="none"/></g></svg>
</body></html>
